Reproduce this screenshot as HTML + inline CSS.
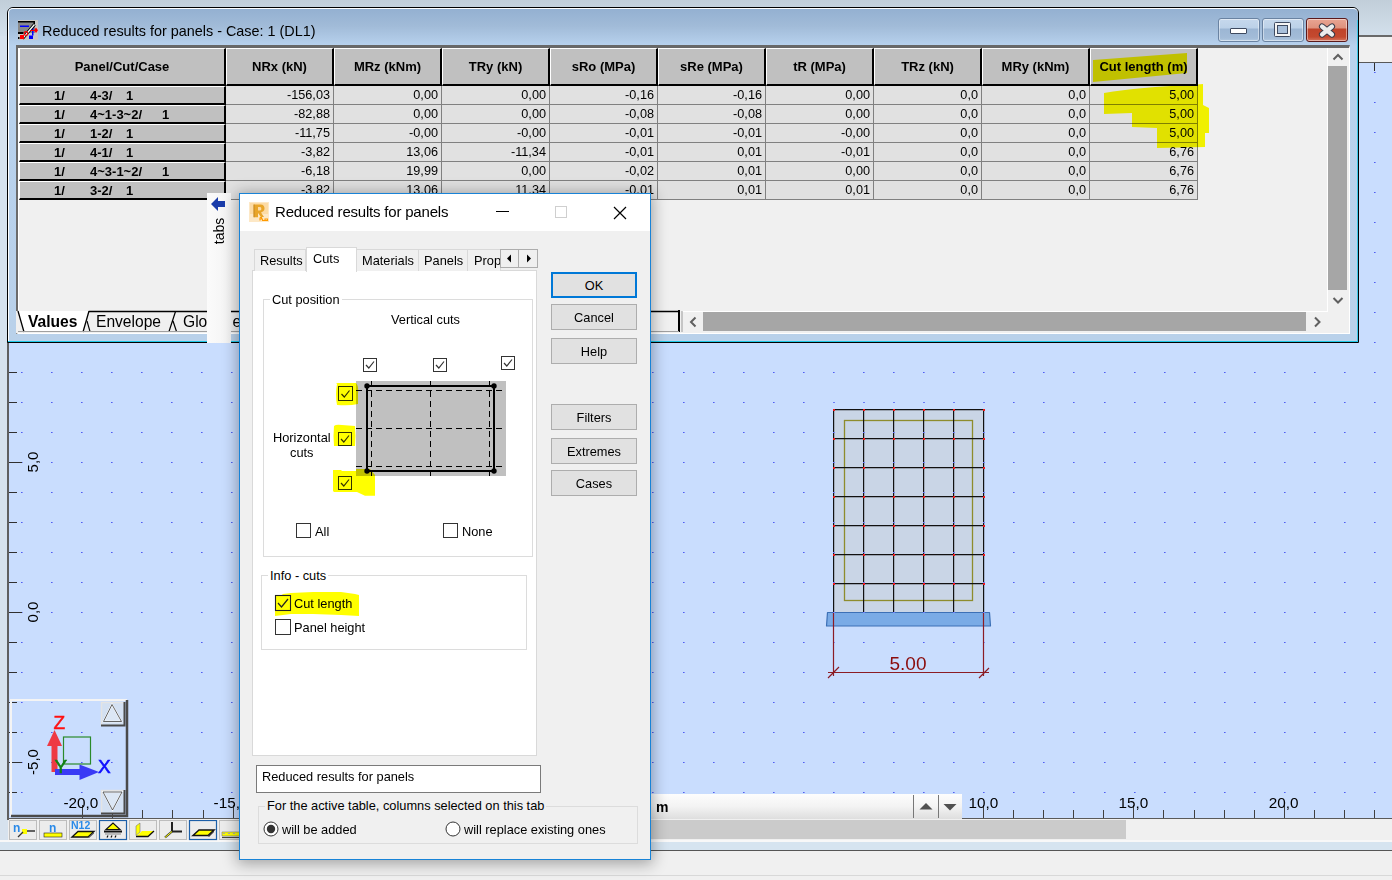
<!DOCTYPE html>
<html><head><meta charset="utf-8">
<style>
*{box-sizing:border-box;margin:0;padding:0}
html,body{width:1392px;height:880px;overflow:hidden;background:#f0f0f0;font-family:"Liberation Sans",sans-serif;position:relative}
.a{position:absolute}
#topbg{left:0;top:0;width:1392px;height:36px;background:linear-gradient(#c1ced9,#d3e0ec)}
#leftbg{left:0;top:36px;width:8px;height:815px;background:#d6e2ee}
#botbg{left:0;top:840px;width:1392px;height:11px;background:#d6e4f0;border-top:2px solid #f8f8f8;border-bottom:1px solid #555}
#tbband{left:1358px;top:35px;width:34px;height:28px;background:#f0f0f0;border-top:2px solid #6a6a6a;border-bottom:1px solid #585858}
#vp{left:7px;top:63px;width:1385px;height:757px;background:#c9ddfe;border-left:2px solid #5f5f5f}
#hscroll{left:9px;top:819px;width:1383px;height:21px;background:#f0f0f0}
#hthumb{left:640px;top:820px;width:486px;height:19px;background:#cbcbcb}
#status{left:0;top:851px;width:1392px;height:29px;background:#f0f0f0}
#status:after{content:"";position:absolute;left:0;top:24px;width:1392px;height:1px;background:#d8d8d8}
/* main window */
#win{left:7px;top:7px;width:1352px;height:336px;border:1px solid #000;border-radius:6px 6px 0 0;background:linear-gradient(#93b0d1 0px,#a1bbd8 18px,#b8d2ee 38px,#b9d1ea 100%)}
#win:before{content:"";position:absolute;left:0;top:0;right:0;bottom:0;border-top:1px solid #fff;border-left:1px solid #fff;border-radius:5px 5px 0 0}
#winbot{left:8px;top:341px;width:1350px;height:1px;background:#1ec8e8}
#winright{left:1357px;top:20px;width:1px;height:322px;background:#3cc8e8}
#title{left:42px;top:23px;font-size:14.4px;color:#000;white-space:nowrap}
#client{left:16px;top:45px;width:1334px;height:289px;background:#f0f0f0;border-top:3px solid #686868;border-left:2px solid #6b6b6b;border-bottom:1px solid #fff;border-right:1px solid #fff;box-shadow:inset 1px 0 0 #fff}
.wb{position:absolute;top:18px;width:42px;height:24px;border:1px solid #6a83a2;border-radius:3px;background:linear-gradient(#c6d8ec 0,#bcd1e8 9px,#9cb6d4 10px,#a3bcd8 19px,#b9cfe6 23px);box-shadow:inset 0 0 0 1px rgba(255,255,255,.45)}
#wclose{border-color:#5b1a1c;background:linear-gradient(#e9a593 0,#df917d 9px,#c0432a 10px,#c4492f 18px,#d9826c 23px)}
.hd{position:absolute;background:#c0c0c0;border-top:1px solid #fff;border-left:1px solid #fff;border-right:2px solid #000;border-bottom:2px solid #000;font-weight:bold;font-size:13px;text-align:center;white-space:nowrap;color:#000}
.rh{position:absolute;background:#c0c0c0;border-top:1px solid #fff;border-left:1px solid #fff;border-right:2px solid #000;border-bottom:2px solid #000;font-weight:bold;font-size:13px;white-space:pre;color:#000}
.dc{position:absolute;background:#e1e1e1;border-right:1px solid #808080;border-bottom:1px solid #808080;font-size:12.7px;text-align:right;padding-right:3px;white-space:nowrap;color:#000}
.sb{position:absolute;background:#a6a6a6}
/* dialog */
#dshadow{left:239px;top:193px;width:412px;height:667px;box-shadow:0 2px 14px 2px rgba(0,0,0,.32)}
#dlg{left:239px;top:193px;width:412px;height:667px;background:#f0f0f0;border:1px solid #1883d7}
#dlgtitle{left:240px;top:194px;width:410px;height:37px;background:#fff}
.t{position:absolute;font-size:12.8px;color:#000;white-space:nowrap;line-height:15px}
.btn{position:absolute;left:551px;width:86px;height:26px;background:#e1e1e1;border:1px solid #adadad;font-size:12.8px;text-align:center;line-height:25px;color:#000}
.cb{position:absolute;width:14px;height:14px;border:1px solid #333;background:#fff}
.cb svg{position:absolute;left:1px;top:1px}
.tab{position:absolute;top:249px;height:22px;background:#f0f0f0;border:1px solid #d9d9d9;border-bottom:none;font-size:12.8px;line-height:22px;padding-left:5px;color:#000;white-space:nowrap;overflow:hidden}
.grp{position:absolute;border:1px solid #dcdcdc}
.hl{position:absolute;background:#ffff00}
.mb{mix-blend-mode:multiply}
</style></head><body>
<div class="a" id="topbg"></div>
<div class="a" id="leftbg"></div>
<div class="a" id="tbband"></div>
<div class="a" id="vp"></div>
<div class="a" id="hscroll"></div>
<div class="a" id="hthumb"></div>
<div class="a" id="botbg"></div>
<div class="a" id="status"></div>
<svg class="a" style="left:0;top:0" width="1392" height="880" shape-rendering="crispEdges">
<path fill="#8390f6" d="M21 792h2v1h-2zM21 762h2v1h-2zM21 732h2v1h-2zM21 702h2v1h-2zM21 672h2v1h-2zM21 642h2v1h-2zM21 612h2v1h-2zM21 582h2v1h-2zM21 552h2v1h-2zM21 522h2v1h-2zM21 492h2v1h-2zM21 462h2v1h-2zM21 432h2v1h-2zM21 402h2v1h-2zM21 372h2v1h-2zM21 342h2v1h-2zM21 312h2v1h-2zM21 282h2v1h-2zM21 252h2v1h-2zM21 222h2v1h-2zM21 192h2v1h-2zM21 162h2v1h-2zM21 132h2v1h-2zM21 102h2v1h-2zM21 72h2v1h-2zM51 792h2v1h-2zM51 762h2v1h-2zM51 732h2v1h-2zM51 702h2v1h-2zM51 672h2v1h-2zM51 642h2v1h-2zM51 612h2v1h-2zM51 582h2v1h-2zM51 552h2v1h-2zM51 522h2v1h-2zM51 492h2v1h-2zM51 462h2v1h-2zM51 432h2v1h-2zM51 402h2v1h-2zM51 372h2v1h-2zM51 342h2v1h-2zM51 312h2v1h-2zM51 282h2v1h-2zM51 252h2v1h-2zM51 222h2v1h-2zM51 192h2v1h-2zM51 162h2v1h-2zM51 132h2v1h-2zM51 102h2v1h-2zM51 72h2v1h-2zM81 792h2v1h-2zM81 762h2v1h-2zM81 732h2v1h-2zM81 702h2v1h-2zM81 672h2v1h-2zM81 642h2v1h-2zM81 612h2v1h-2zM81 582h2v1h-2zM81 552h2v1h-2zM81 522h2v1h-2zM81 492h2v1h-2zM81 462h2v1h-2zM81 432h2v1h-2zM81 402h2v1h-2zM81 372h2v1h-2zM81 342h2v1h-2zM81 312h2v1h-2zM81 282h2v1h-2zM81 252h2v1h-2zM81 222h2v1h-2zM81 192h2v1h-2zM81 162h2v1h-2zM81 132h2v1h-2zM81 102h2v1h-2zM81 72h2v1h-2zM111 792h2v1h-2zM111 762h2v1h-2zM111 732h2v1h-2zM111 702h2v1h-2zM111 672h2v1h-2zM111 642h2v1h-2zM111 612h2v1h-2zM111 582h2v1h-2zM111 552h2v1h-2zM111 522h2v1h-2zM111 492h2v1h-2zM111 462h2v1h-2zM111 432h2v1h-2zM111 402h2v1h-2zM111 372h2v1h-2zM111 342h2v1h-2zM111 312h2v1h-2zM111 282h2v1h-2zM111 252h2v1h-2zM111 222h2v1h-2zM111 192h2v1h-2zM111 162h2v1h-2zM111 132h2v1h-2zM111 102h2v1h-2zM111 72h2v1h-2zM141 792h2v1h-2zM141 762h2v1h-2zM141 732h2v1h-2zM141 702h2v1h-2zM141 672h2v1h-2zM141 642h2v1h-2zM141 612h2v1h-2zM141 582h2v1h-2zM141 552h2v1h-2zM141 522h2v1h-2zM141 492h2v1h-2zM141 462h2v1h-2zM141 432h2v1h-2zM141 402h2v1h-2zM141 372h2v1h-2zM141 342h2v1h-2zM141 312h2v1h-2zM141 282h2v1h-2zM141 252h2v1h-2zM141 222h2v1h-2zM141 192h2v1h-2zM141 162h2v1h-2zM141 132h2v1h-2zM141 102h2v1h-2zM141 72h2v1h-2zM171 792h2v1h-2zM171 762h2v1h-2zM171 732h2v1h-2zM171 702h2v1h-2zM171 672h2v1h-2zM171 642h2v1h-2zM171 612h2v1h-2zM171 582h2v1h-2zM171 552h2v1h-2zM171 522h2v1h-2zM171 492h2v1h-2zM171 462h2v1h-2zM171 432h2v1h-2zM171 402h2v1h-2zM171 372h2v1h-2zM171 342h2v1h-2zM171 312h2v1h-2zM171 282h2v1h-2zM171 252h2v1h-2zM171 222h2v1h-2zM171 192h2v1h-2zM171 162h2v1h-2zM171 132h2v1h-2zM171 102h2v1h-2zM171 72h2v1h-2zM201 792h2v1h-2zM201 762h2v1h-2zM201 732h2v1h-2zM201 702h2v1h-2zM201 672h2v1h-2zM201 642h2v1h-2zM201 612h2v1h-2zM201 582h2v1h-2zM201 552h2v1h-2zM201 522h2v1h-2zM201 492h2v1h-2zM201 462h2v1h-2zM201 432h2v1h-2zM201 402h2v1h-2zM201 372h2v1h-2zM201 342h2v1h-2zM201 312h2v1h-2zM201 282h2v1h-2zM201 252h2v1h-2zM201 222h2v1h-2zM201 192h2v1h-2zM201 162h2v1h-2zM201 132h2v1h-2zM201 102h2v1h-2zM201 72h2v1h-2zM231 792h2v1h-2zM231 762h2v1h-2zM231 732h2v1h-2zM231 702h2v1h-2zM231 672h2v1h-2zM231 642h2v1h-2zM231 612h2v1h-2zM231 582h2v1h-2zM231 552h2v1h-2zM231 522h2v1h-2zM231 492h2v1h-2zM231 462h2v1h-2zM231 432h2v1h-2zM231 402h2v1h-2zM231 372h2v1h-2zM231 342h2v1h-2zM231 312h2v1h-2zM231 282h2v1h-2zM231 252h2v1h-2zM231 222h2v1h-2zM231 192h2v1h-2zM231 162h2v1h-2zM231 132h2v1h-2zM231 102h2v1h-2zM231 72h2v1h-2zM262 792h2v1h-2zM262 762h2v1h-2zM262 732h2v1h-2zM262 702h2v1h-2zM262 672h2v1h-2zM262 642h2v1h-2zM262 612h2v1h-2zM262 582h2v1h-2zM262 552h2v1h-2zM262 522h2v1h-2zM262 492h2v1h-2zM262 462h2v1h-2zM262 432h2v1h-2zM262 402h2v1h-2zM262 372h2v1h-2zM262 342h2v1h-2zM262 312h2v1h-2zM262 282h2v1h-2zM262 252h2v1h-2zM262 222h2v1h-2zM262 192h2v1h-2zM262 162h2v1h-2zM262 132h2v1h-2zM262 102h2v1h-2zM262 72h2v1h-2zM292 792h2v1h-2zM292 762h2v1h-2zM292 732h2v1h-2zM292 702h2v1h-2zM292 672h2v1h-2zM292 642h2v1h-2zM292 612h2v1h-2zM292 582h2v1h-2zM292 552h2v1h-2zM292 522h2v1h-2zM292 492h2v1h-2zM292 462h2v1h-2zM292 432h2v1h-2zM292 402h2v1h-2zM292 372h2v1h-2zM292 342h2v1h-2zM292 312h2v1h-2zM292 282h2v1h-2zM292 252h2v1h-2zM292 222h2v1h-2zM292 192h2v1h-2zM292 162h2v1h-2zM292 132h2v1h-2zM292 102h2v1h-2zM292 72h2v1h-2zM322 792h2v1h-2zM322 762h2v1h-2zM322 732h2v1h-2zM322 702h2v1h-2zM322 672h2v1h-2zM322 642h2v1h-2zM322 612h2v1h-2zM322 582h2v1h-2zM322 552h2v1h-2zM322 522h2v1h-2zM322 492h2v1h-2zM322 462h2v1h-2zM322 432h2v1h-2zM322 402h2v1h-2zM322 372h2v1h-2zM322 342h2v1h-2zM322 312h2v1h-2zM322 282h2v1h-2zM322 252h2v1h-2zM322 222h2v1h-2zM322 192h2v1h-2zM322 162h2v1h-2zM322 132h2v1h-2zM322 102h2v1h-2zM322 72h2v1h-2zM352 792h2v1h-2zM352 762h2v1h-2zM352 732h2v1h-2zM352 702h2v1h-2zM352 672h2v1h-2zM352 642h2v1h-2zM352 612h2v1h-2zM352 582h2v1h-2zM352 552h2v1h-2zM352 522h2v1h-2zM352 492h2v1h-2zM352 462h2v1h-2zM352 432h2v1h-2zM352 402h2v1h-2zM352 372h2v1h-2zM352 342h2v1h-2zM352 312h2v1h-2zM352 282h2v1h-2zM352 252h2v1h-2zM352 222h2v1h-2zM352 192h2v1h-2zM352 162h2v1h-2zM352 132h2v1h-2zM352 102h2v1h-2zM352 72h2v1h-2zM382 792h2v1h-2zM382 762h2v1h-2zM382 732h2v1h-2zM382 702h2v1h-2zM382 672h2v1h-2zM382 642h2v1h-2zM382 612h2v1h-2zM382 582h2v1h-2zM382 552h2v1h-2zM382 522h2v1h-2zM382 492h2v1h-2zM382 462h2v1h-2zM382 432h2v1h-2zM382 402h2v1h-2zM382 372h2v1h-2zM382 342h2v1h-2zM382 312h2v1h-2zM382 282h2v1h-2zM382 252h2v1h-2zM382 222h2v1h-2zM382 192h2v1h-2zM382 162h2v1h-2zM382 132h2v1h-2zM382 102h2v1h-2zM382 72h2v1h-2zM412 792h2v1h-2zM412 762h2v1h-2zM412 732h2v1h-2zM412 702h2v1h-2zM412 672h2v1h-2zM412 642h2v1h-2zM412 612h2v1h-2zM412 582h2v1h-2zM412 552h2v1h-2zM412 522h2v1h-2zM412 492h2v1h-2zM412 462h2v1h-2zM412 432h2v1h-2zM412 402h2v1h-2zM412 372h2v1h-2zM412 342h2v1h-2zM412 312h2v1h-2zM412 282h2v1h-2zM412 252h2v1h-2zM412 222h2v1h-2zM412 192h2v1h-2zM412 162h2v1h-2zM412 132h2v1h-2zM412 102h2v1h-2zM412 72h2v1h-2zM442 792h2v1h-2zM442 762h2v1h-2zM442 732h2v1h-2zM442 702h2v1h-2zM442 672h2v1h-2zM442 642h2v1h-2zM442 612h2v1h-2zM442 582h2v1h-2zM442 552h2v1h-2zM442 522h2v1h-2zM442 492h2v1h-2zM442 462h2v1h-2zM442 432h2v1h-2zM442 402h2v1h-2zM442 372h2v1h-2zM442 342h2v1h-2zM442 312h2v1h-2zM442 282h2v1h-2zM442 252h2v1h-2zM442 222h2v1h-2zM442 192h2v1h-2zM442 162h2v1h-2zM442 132h2v1h-2zM442 102h2v1h-2zM442 72h2v1h-2zM472 792h2v1h-2zM472 762h2v1h-2zM472 732h2v1h-2zM472 702h2v1h-2zM472 672h2v1h-2zM472 642h2v1h-2zM472 612h2v1h-2zM472 582h2v1h-2zM472 552h2v1h-2zM472 522h2v1h-2zM472 492h2v1h-2zM472 462h2v1h-2zM472 432h2v1h-2zM472 402h2v1h-2zM472 372h2v1h-2zM472 342h2v1h-2zM472 312h2v1h-2zM472 282h2v1h-2zM472 252h2v1h-2zM472 222h2v1h-2zM472 192h2v1h-2zM472 162h2v1h-2zM472 132h2v1h-2zM472 102h2v1h-2zM472 72h2v1h-2zM502 792h2v1h-2zM502 762h2v1h-2zM502 732h2v1h-2zM502 702h2v1h-2zM502 672h2v1h-2zM502 642h2v1h-2zM502 612h2v1h-2zM502 582h2v1h-2zM502 552h2v1h-2zM502 522h2v1h-2zM502 492h2v1h-2zM502 462h2v1h-2zM502 432h2v1h-2zM502 402h2v1h-2zM502 372h2v1h-2zM502 342h2v1h-2zM502 312h2v1h-2zM502 282h2v1h-2zM502 252h2v1h-2zM502 222h2v1h-2zM502 192h2v1h-2zM502 162h2v1h-2zM502 132h2v1h-2zM502 102h2v1h-2zM502 72h2v1h-2zM532 792h2v1h-2zM532 762h2v1h-2zM532 732h2v1h-2zM532 702h2v1h-2zM532 672h2v1h-2zM532 642h2v1h-2zM532 612h2v1h-2zM532 582h2v1h-2zM532 552h2v1h-2zM532 522h2v1h-2zM532 492h2v1h-2zM532 462h2v1h-2zM532 432h2v1h-2zM532 402h2v1h-2zM532 372h2v1h-2zM532 342h2v1h-2zM532 312h2v1h-2zM532 282h2v1h-2zM532 252h2v1h-2zM532 222h2v1h-2zM532 192h2v1h-2zM532 162h2v1h-2zM532 132h2v1h-2zM532 102h2v1h-2zM532 72h2v1h-2zM562 792h2v1h-2zM562 762h2v1h-2zM562 732h2v1h-2zM562 702h2v1h-2zM562 672h2v1h-2zM562 642h2v1h-2zM562 612h2v1h-2zM562 582h2v1h-2zM562 552h2v1h-2zM562 522h2v1h-2zM562 492h2v1h-2zM562 462h2v1h-2zM562 432h2v1h-2zM562 402h2v1h-2zM562 372h2v1h-2zM562 342h2v1h-2zM562 312h2v1h-2zM562 282h2v1h-2zM562 252h2v1h-2zM562 222h2v1h-2zM562 192h2v1h-2zM562 162h2v1h-2zM562 132h2v1h-2zM562 102h2v1h-2zM562 72h2v1h-2zM592 792h2v1h-2zM592 762h2v1h-2zM592 732h2v1h-2zM592 702h2v1h-2zM592 672h2v1h-2zM592 642h2v1h-2zM592 612h2v1h-2zM592 582h2v1h-2zM592 552h2v1h-2zM592 522h2v1h-2zM592 492h2v1h-2zM592 462h2v1h-2zM592 432h2v1h-2zM592 402h2v1h-2zM592 372h2v1h-2zM592 342h2v1h-2zM592 312h2v1h-2zM592 282h2v1h-2zM592 252h2v1h-2zM592 222h2v1h-2zM592 192h2v1h-2zM592 162h2v1h-2zM592 132h2v1h-2zM592 102h2v1h-2zM592 72h2v1h-2zM622 792h2v1h-2zM622 762h2v1h-2zM622 732h2v1h-2zM622 702h2v1h-2zM622 672h2v1h-2zM622 642h2v1h-2zM622 612h2v1h-2zM622 582h2v1h-2zM622 552h2v1h-2zM622 522h2v1h-2zM622 492h2v1h-2zM622 462h2v1h-2zM622 432h2v1h-2zM622 402h2v1h-2zM622 372h2v1h-2zM622 342h2v1h-2zM622 312h2v1h-2zM622 282h2v1h-2zM622 252h2v1h-2zM622 222h2v1h-2zM622 192h2v1h-2zM622 162h2v1h-2zM622 132h2v1h-2zM622 102h2v1h-2zM622 72h2v1h-2zM652 792h2v1h-2zM652 762h2v1h-2zM652 732h2v1h-2zM652 702h2v1h-2zM652 672h2v1h-2zM652 642h2v1h-2zM652 612h2v1h-2zM652 582h2v1h-2zM652 552h2v1h-2zM652 522h2v1h-2zM652 492h2v1h-2zM652 462h2v1h-2zM652 432h2v1h-2zM652 402h2v1h-2zM652 372h2v1h-2zM652 342h2v1h-2zM652 312h2v1h-2zM652 282h2v1h-2zM652 252h2v1h-2zM652 222h2v1h-2zM652 192h2v1h-2zM652 162h2v1h-2zM652 132h2v1h-2zM652 102h2v1h-2zM652 72h2v1h-2zM683 792h2v1h-2zM683 762h2v1h-2zM683 732h2v1h-2zM683 702h2v1h-2zM683 672h2v1h-2zM683 642h2v1h-2zM683 612h2v1h-2zM683 582h2v1h-2zM683 552h2v1h-2zM683 522h2v1h-2zM683 492h2v1h-2zM683 462h2v1h-2zM683 432h2v1h-2zM683 402h2v1h-2zM683 372h2v1h-2zM683 342h2v1h-2zM683 312h2v1h-2zM683 282h2v1h-2zM683 252h2v1h-2zM683 222h2v1h-2zM683 192h2v1h-2zM683 162h2v1h-2zM683 132h2v1h-2zM683 102h2v1h-2zM683 72h2v1h-2zM713 792h2v1h-2zM713 762h2v1h-2zM713 732h2v1h-2zM713 702h2v1h-2zM713 672h2v1h-2zM713 642h2v1h-2zM713 612h2v1h-2zM713 582h2v1h-2zM713 552h2v1h-2zM713 522h2v1h-2zM713 492h2v1h-2zM713 462h2v1h-2zM713 432h2v1h-2zM713 402h2v1h-2zM713 372h2v1h-2zM713 342h2v1h-2zM713 312h2v1h-2zM713 282h2v1h-2zM713 252h2v1h-2zM713 222h2v1h-2zM713 192h2v1h-2zM713 162h2v1h-2zM713 132h2v1h-2zM713 102h2v1h-2zM713 72h2v1h-2zM743 792h2v1h-2zM743 762h2v1h-2zM743 732h2v1h-2zM743 702h2v1h-2zM743 672h2v1h-2zM743 642h2v1h-2zM743 612h2v1h-2zM743 582h2v1h-2zM743 552h2v1h-2zM743 522h2v1h-2zM743 492h2v1h-2zM743 462h2v1h-2zM743 432h2v1h-2zM743 402h2v1h-2zM743 372h2v1h-2zM743 342h2v1h-2zM743 312h2v1h-2zM743 282h2v1h-2zM743 252h2v1h-2zM743 222h2v1h-2zM743 192h2v1h-2zM743 162h2v1h-2zM743 132h2v1h-2zM743 102h2v1h-2zM743 72h2v1h-2zM773 792h2v1h-2zM773 762h2v1h-2zM773 732h2v1h-2zM773 702h2v1h-2zM773 672h2v1h-2zM773 642h2v1h-2zM773 612h2v1h-2zM773 582h2v1h-2zM773 552h2v1h-2zM773 522h2v1h-2zM773 492h2v1h-2zM773 462h2v1h-2zM773 432h2v1h-2zM773 402h2v1h-2zM773 372h2v1h-2zM773 342h2v1h-2zM773 312h2v1h-2zM773 282h2v1h-2zM773 252h2v1h-2zM773 222h2v1h-2zM773 192h2v1h-2zM773 162h2v1h-2zM773 132h2v1h-2zM773 102h2v1h-2zM773 72h2v1h-2zM803 792h2v1h-2zM803 762h2v1h-2zM803 732h2v1h-2zM803 702h2v1h-2zM803 672h2v1h-2zM803 642h2v1h-2zM803 612h2v1h-2zM803 582h2v1h-2zM803 552h2v1h-2zM803 522h2v1h-2zM803 492h2v1h-2zM803 462h2v1h-2zM803 432h2v1h-2zM803 402h2v1h-2zM803 372h2v1h-2zM803 342h2v1h-2zM803 312h2v1h-2zM803 282h2v1h-2zM803 252h2v1h-2zM803 222h2v1h-2zM803 192h2v1h-2zM803 162h2v1h-2zM803 132h2v1h-2zM803 102h2v1h-2zM803 72h2v1h-2zM833 792h2v1h-2zM833 762h2v1h-2zM833 732h2v1h-2zM833 702h2v1h-2zM833 672h2v1h-2zM833 642h2v1h-2zM833 612h2v1h-2zM833 582h2v1h-2zM833 552h2v1h-2zM833 522h2v1h-2zM833 492h2v1h-2zM833 462h2v1h-2zM833 432h2v1h-2zM833 402h2v1h-2zM833 372h2v1h-2zM833 342h2v1h-2zM833 312h2v1h-2zM833 282h2v1h-2zM833 252h2v1h-2zM833 222h2v1h-2zM833 192h2v1h-2zM833 162h2v1h-2zM833 132h2v1h-2zM833 102h2v1h-2zM833 72h2v1h-2zM863 792h2v1h-2zM863 762h2v1h-2zM863 732h2v1h-2zM863 702h2v1h-2zM863 672h2v1h-2zM863 642h2v1h-2zM863 612h2v1h-2zM863 582h2v1h-2zM863 552h2v1h-2zM863 522h2v1h-2zM863 492h2v1h-2zM863 462h2v1h-2zM863 432h2v1h-2zM863 402h2v1h-2zM863 372h2v1h-2zM863 342h2v1h-2zM863 312h2v1h-2zM863 282h2v1h-2zM863 252h2v1h-2zM863 222h2v1h-2zM863 192h2v1h-2zM863 162h2v1h-2zM863 132h2v1h-2zM863 102h2v1h-2zM863 72h2v1h-2zM893 792h2v1h-2zM893 762h2v1h-2zM893 732h2v1h-2zM893 702h2v1h-2zM893 672h2v1h-2zM893 642h2v1h-2zM893 612h2v1h-2zM893 582h2v1h-2zM893 552h2v1h-2zM893 522h2v1h-2zM893 492h2v1h-2zM893 462h2v1h-2zM893 432h2v1h-2zM893 402h2v1h-2zM893 372h2v1h-2zM893 342h2v1h-2zM893 312h2v1h-2zM893 282h2v1h-2zM893 252h2v1h-2zM893 222h2v1h-2zM893 192h2v1h-2zM893 162h2v1h-2zM893 132h2v1h-2zM893 102h2v1h-2zM893 72h2v1h-2zM923 792h2v1h-2zM923 762h2v1h-2zM923 732h2v1h-2zM923 702h2v1h-2zM923 672h2v1h-2zM923 642h2v1h-2zM923 612h2v1h-2zM923 582h2v1h-2zM923 552h2v1h-2zM923 522h2v1h-2zM923 492h2v1h-2zM923 462h2v1h-2zM923 432h2v1h-2zM923 402h2v1h-2zM923 372h2v1h-2zM923 342h2v1h-2zM923 312h2v1h-2zM923 282h2v1h-2zM923 252h2v1h-2zM923 222h2v1h-2zM923 192h2v1h-2zM923 162h2v1h-2zM923 132h2v1h-2zM923 102h2v1h-2zM923 72h2v1h-2zM953 792h2v1h-2zM953 762h2v1h-2zM953 732h2v1h-2zM953 702h2v1h-2zM953 672h2v1h-2zM953 642h2v1h-2zM953 612h2v1h-2zM953 582h2v1h-2zM953 552h2v1h-2zM953 522h2v1h-2zM953 492h2v1h-2zM953 462h2v1h-2zM953 432h2v1h-2zM953 402h2v1h-2zM953 372h2v1h-2zM953 342h2v1h-2zM953 312h2v1h-2zM953 282h2v1h-2zM953 252h2v1h-2zM953 222h2v1h-2zM953 192h2v1h-2zM953 162h2v1h-2zM953 132h2v1h-2zM953 102h2v1h-2zM953 72h2v1h-2zM983 792h2v1h-2zM983 762h2v1h-2zM983 732h2v1h-2zM983 702h2v1h-2zM983 672h2v1h-2zM983 642h2v1h-2zM983 612h2v1h-2zM983 582h2v1h-2zM983 552h2v1h-2zM983 522h2v1h-2zM983 492h2v1h-2zM983 462h2v1h-2zM983 432h2v1h-2zM983 402h2v1h-2zM983 372h2v1h-2zM983 342h2v1h-2zM983 312h2v1h-2zM983 282h2v1h-2zM983 252h2v1h-2zM983 222h2v1h-2zM983 192h2v1h-2zM983 162h2v1h-2zM983 132h2v1h-2zM983 102h2v1h-2zM983 72h2v1h-2zM1013 792h2v1h-2zM1013 762h2v1h-2zM1013 732h2v1h-2zM1013 702h2v1h-2zM1013 672h2v1h-2zM1013 642h2v1h-2zM1013 612h2v1h-2zM1013 582h2v1h-2zM1013 552h2v1h-2zM1013 522h2v1h-2zM1013 492h2v1h-2zM1013 462h2v1h-2zM1013 432h2v1h-2zM1013 402h2v1h-2zM1013 372h2v1h-2zM1013 342h2v1h-2zM1013 312h2v1h-2zM1013 282h2v1h-2zM1013 252h2v1h-2zM1013 222h2v1h-2zM1013 192h2v1h-2zM1013 162h2v1h-2zM1013 132h2v1h-2zM1013 102h2v1h-2zM1013 72h2v1h-2zM1043 792h2v1h-2zM1043 762h2v1h-2zM1043 732h2v1h-2zM1043 702h2v1h-2zM1043 672h2v1h-2zM1043 642h2v1h-2zM1043 612h2v1h-2zM1043 582h2v1h-2zM1043 552h2v1h-2zM1043 522h2v1h-2zM1043 492h2v1h-2zM1043 462h2v1h-2zM1043 432h2v1h-2zM1043 402h2v1h-2zM1043 372h2v1h-2zM1043 342h2v1h-2zM1043 312h2v1h-2zM1043 282h2v1h-2zM1043 252h2v1h-2zM1043 222h2v1h-2zM1043 192h2v1h-2zM1043 162h2v1h-2zM1043 132h2v1h-2zM1043 102h2v1h-2zM1043 72h2v1h-2zM1073 792h2v1h-2zM1073 762h2v1h-2zM1073 732h2v1h-2zM1073 702h2v1h-2zM1073 672h2v1h-2zM1073 642h2v1h-2zM1073 612h2v1h-2zM1073 582h2v1h-2zM1073 552h2v1h-2zM1073 522h2v1h-2zM1073 492h2v1h-2zM1073 462h2v1h-2zM1073 432h2v1h-2zM1073 402h2v1h-2zM1073 372h2v1h-2zM1073 342h2v1h-2zM1073 312h2v1h-2zM1073 282h2v1h-2zM1073 252h2v1h-2zM1073 222h2v1h-2zM1073 192h2v1h-2zM1073 162h2v1h-2zM1073 132h2v1h-2zM1073 102h2v1h-2zM1073 72h2v1h-2zM1104 792h2v1h-2zM1104 762h2v1h-2zM1104 732h2v1h-2zM1104 702h2v1h-2zM1104 672h2v1h-2zM1104 642h2v1h-2zM1104 612h2v1h-2zM1104 582h2v1h-2zM1104 552h2v1h-2zM1104 522h2v1h-2zM1104 492h2v1h-2zM1104 462h2v1h-2zM1104 432h2v1h-2zM1104 402h2v1h-2zM1104 372h2v1h-2zM1104 342h2v1h-2zM1104 312h2v1h-2zM1104 282h2v1h-2zM1104 252h2v1h-2zM1104 222h2v1h-2zM1104 192h2v1h-2zM1104 162h2v1h-2zM1104 132h2v1h-2zM1104 102h2v1h-2zM1104 72h2v1h-2zM1134 792h2v1h-2zM1134 762h2v1h-2zM1134 732h2v1h-2zM1134 702h2v1h-2zM1134 672h2v1h-2zM1134 642h2v1h-2zM1134 612h2v1h-2zM1134 582h2v1h-2zM1134 552h2v1h-2zM1134 522h2v1h-2zM1134 492h2v1h-2zM1134 462h2v1h-2zM1134 432h2v1h-2zM1134 402h2v1h-2zM1134 372h2v1h-2zM1134 342h2v1h-2zM1134 312h2v1h-2zM1134 282h2v1h-2zM1134 252h2v1h-2zM1134 222h2v1h-2zM1134 192h2v1h-2zM1134 162h2v1h-2zM1134 132h2v1h-2zM1134 102h2v1h-2zM1134 72h2v1h-2zM1164 792h2v1h-2zM1164 762h2v1h-2zM1164 732h2v1h-2zM1164 702h2v1h-2zM1164 672h2v1h-2zM1164 642h2v1h-2zM1164 612h2v1h-2zM1164 582h2v1h-2zM1164 552h2v1h-2zM1164 522h2v1h-2zM1164 492h2v1h-2zM1164 462h2v1h-2zM1164 432h2v1h-2zM1164 402h2v1h-2zM1164 372h2v1h-2zM1164 342h2v1h-2zM1164 312h2v1h-2zM1164 282h2v1h-2zM1164 252h2v1h-2zM1164 222h2v1h-2zM1164 192h2v1h-2zM1164 162h2v1h-2zM1164 132h2v1h-2zM1164 102h2v1h-2zM1164 72h2v1h-2zM1194 792h2v1h-2zM1194 762h2v1h-2zM1194 732h2v1h-2zM1194 702h2v1h-2zM1194 672h2v1h-2zM1194 642h2v1h-2zM1194 612h2v1h-2zM1194 582h2v1h-2zM1194 552h2v1h-2zM1194 522h2v1h-2zM1194 492h2v1h-2zM1194 462h2v1h-2zM1194 432h2v1h-2zM1194 402h2v1h-2zM1194 372h2v1h-2zM1194 342h2v1h-2zM1194 312h2v1h-2zM1194 282h2v1h-2zM1194 252h2v1h-2zM1194 222h2v1h-2zM1194 192h2v1h-2zM1194 162h2v1h-2zM1194 132h2v1h-2zM1194 102h2v1h-2zM1194 72h2v1h-2zM1224 792h2v1h-2zM1224 762h2v1h-2zM1224 732h2v1h-2zM1224 702h2v1h-2zM1224 672h2v1h-2zM1224 642h2v1h-2zM1224 612h2v1h-2zM1224 582h2v1h-2zM1224 552h2v1h-2zM1224 522h2v1h-2zM1224 492h2v1h-2zM1224 462h2v1h-2zM1224 432h2v1h-2zM1224 402h2v1h-2zM1224 372h2v1h-2zM1224 342h2v1h-2zM1224 312h2v1h-2zM1224 282h2v1h-2zM1224 252h2v1h-2zM1224 222h2v1h-2zM1224 192h2v1h-2zM1224 162h2v1h-2zM1224 132h2v1h-2zM1224 102h2v1h-2zM1224 72h2v1h-2zM1254 792h2v1h-2zM1254 762h2v1h-2zM1254 732h2v1h-2zM1254 702h2v1h-2zM1254 672h2v1h-2zM1254 642h2v1h-2zM1254 612h2v1h-2zM1254 582h2v1h-2zM1254 552h2v1h-2zM1254 522h2v1h-2zM1254 492h2v1h-2zM1254 462h2v1h-2zM1254 432h2v1h-2zM1254 402h2v1h-2zM1254 372h2v1h-2zM1254 342h2v1h-2zM1254 312h2v1h-2zM1254 282h2v1h-2zM1254 252h2v1h-2zM1254 222h2v1h-2zM1254 192h2v1h-2zM1254 162h2v1h-2zM1254 132h2v1h-2zM1254 102h2v1h-2zM1254 72h2v1h-2zM1284 792h2v1h-2zM1284 762h2v1h-2zM1284 732h2v1h-2zM1284 702h2v1h-2zM1284 672h2v1h-2zM1284 642h2v1h-2zM1284 612h2v1h-2zM1284 582h2v1h-2zM1284 552h2v1h-2zM1284 522h2v1h-2zM1284 492h2v1h-2zM1284 462h2v1h-2zM1284 432h2v1h-2zM1284 402h2v1h-2zM1284 372h2v1h-2zM1284 342h2v1h-2zM1284 312h2v1h-2zM1284 282h2v1h-2zM1284 252h2v1h-2zM1284 222h2v1h-2zM1284 192h2v1h-2zM1284 162h2v1h-2zM1284 132h2v1h-2zM1284 102h2v1h-2zM1284 72h2v1h-2zM1314 792h2v1h-2zM1314 762h2v1h-2zM1314 732h2v1h-2zM1314 702h2v1h-2zM1314 672h2v1h-2zM1314 642h2v1h-2zM1314 612h2v1h-2zM1314 582h2v1h-2zM1314 552h2v1h-2zM1314 522h2v1h-2zM1314 492h2v1h-2zM1314 462h2v1h-2zM1314 432h2v1h-2zM1314 402h2v1h-2zM1314 372h2v1h-2zM1314 342h2v1h-2zM1314 312h2v1h-2zM1314 282h2v1h-2zM1314 252h2v1h-2zM1314 222h2v1h-2zM1314 192h2v1h-2zM1314 162h2v1h-2zM1314 132h2v1h-2zM1314 102h2v1h-2zM1314 72h2v1h-2zM1344 792h2v1h-2zM1344 762h2v1h-2zM1344 732h2v1h-2zM1344 702h2v1h-2zM1344 672h2v1h-2zM1344 642h2v1h-2zM1344 612h2v1h-2zM1344 582h2v1h-2zM1344 552h2v1h-2zM1344 522h2v1h-2zM1344 492h2v1h-2zM1344 462h2v1h-2zM1344 432h2v1h-2zM1344 402h2v1h-2zM1344 372h2v1h-2zM1344 342h2v1h-2zM1344 312h2v1h-2zM1344 282h2v1h-2zM1344 252h2v1h-2zM1344 222h2v1h-2zM1344 192h2v1h-2zM1344 162h2v1h-2zM1344 132h2v1h-2zM1344 102h2v1h-2zM1344 72h2v1h-2zM1374 792h2v1h-2zM1374 762h2v1h-2zM1374 732h2v1h-2zM1374 702h2v1h-2zM1374 672h2v1h-2zM1374 642h2v1h-2zM1374 612h2v1h-2zM1374 582h2v1h-2zM1374 552h2v1h-2zM1374 522h2v1h-2zM1374 492h2v1h-2zM1374 462h2v1h-2zM1374 432h2v1h-2zM1374 402h2v1h-2zM1374 372h2v1h-2zM1374 342h2v1h-2zM1374 312h2v1h-2zM1374 282h2v1h-2zM1374 252h2v1h-2zM1374 222h2v1h-2zM1374 192h2v1h-2zM1374 162h2v1h-2zM1374 132h2v1h-2zM1374 102h2v1h-2zM1374 72h2v1h-2z"/>
<path fill="#4f5ff2" d="M21 792h1v1h-1zM21 762h1v1h-1zM21 732h1v1h-1zM21 702h1v1h-1zM21 672h1v1h-1zM21 642h1v1h-1zM21 612h1v1h-1zM21 582h1v1h-1zM21 552h1v1h-1zM21 522h1v1h-1zM21 492h1v1h-1zM21 462h1v1h-1zM21 432h1v1h-1zM21 402h1v1h-1zM21 372h1v1h-1zM21 342h1v1h-1zM21 312h1v1h-1zM21 282h1v1h-1zM21 252h1v1h-1zM21 222h1v1h-1zM21 192h1v1h-1zM21 162h1v1h-1zM21 132h1v1h-1zM21 102h1v1h-1zM21 72h1v1h-1zM51 792h1v1h-1zM51 762h1v1h-1zM51 732h1v1h-1zM51 702h1v1h-1zM51 672h1v1h-1zM51 642h1v1h-1zM51 612h1v1h-1zM51 582h1v1h-1zM51 552h1v1h-1zM51 522h1v1h-1zM51 492h1v1h-1zM51 462h1v1h-1zM51 432h1v1h-1zM51 402h1v1h-1zM51 372h1v1h-1zM51 342h1v1h-1zM51 312h1v1h-1zM51 282h1v1h-1zM51 252h1v1h-1zM51 222h1v1h-1zM51 192h1v1h-1zM51 162h1v1h-1zM51 132h1v1h-1zM51 102h1v1h-1zM51 72h1v1h-1zM81 792h1v1h-1zM81 762h1v1h-1zM81 732h1v1h-1zM81 702h1v1h-1zM81 672h1v1h-1zM81 642h1v1h-1zM81 612h1v1h-1zM81 582h1v1h-1zM81 552h1v1h-1zM81 522h1v1h-1zM81 492h1v1h-1zM81 462h1v1h-1zM81 432h1v1h-1zM81 402h1v1h-1zM81 372h1v1h-1zM81 342h1v1h-1zM81 312h1v1h-1zM81 282h1v1h-1zM81 252h1v1h-1zM81 222h1v1h-1zM81 192h1v1h-1zM81 162h1v1h-1zM81 132h1v1h-1zM81 102h1v1h-1zM81 72h1v1h-1zM111 792h1v1h-1zM111 762h1v1h-1zM111 732h1v1h-1zM111 702h1v1h-1zM111 672h1v1h-1zM111 642h1v1h-1zM111 612h1v1h-1zM111 582h1v1h-1zM111 552h1v1h-1zM111 522h1v1h-1zM111 492h1v1h-1zM111 462h1v1h-1zM111 432h1v1h-1zM111 402h1v1h-1zM111 372h1v1h-1zM111 342h1v1h-1zM111 312h1v1h-1zM111 282h1v1h-1zM111 252h1v1h-1zM111 222h1v1h-1zM111 192h1v1h-1zM111 162h1v1h-1zM111 132h1v1h-1zM111 102h1v1h-1zM111 72h1v1h-1zM141 792h1v1h-1zM141 762h1v1h-1zM141 732h1v1h-1zM141 702h1v1h-1zM141 672h1v1h-1zM141 642h1v1h-1zM141 612h1v1h-1zM141 582h1v1h-1zM141 552h1v1h-1zM141 522h1v1h-1zM141 492h1v1h-1zM141 462h1v1h-1zM141 432h1v1h-1zM141 402h1v1h-1zM141 372h1v1h-1zM141 342h1v1h-1zM141 312h1v1h-1zM141 282h1v1h-1zM141 252h1v1h-1zM141 222h1v1h-1zM141 192h1v1h-1zM141 162h1v1h-1zM141 132h1v1h-1zM141 102h1v1h-1zM141 72h1v1h-1zM171 792h1v1h-1zM171 762h1v1h-1zM171 732h1v1h-1zM171 702h1v1h-1zM171 672h1v1h-1zM171 642h1v1h-1zM171 612h1v1h-1zM171 582h1v1h-1zM171 552h1v1h-1zM171 522h1v1h-1zM171 492h1v1h-1zM171 462h1v1h-1zM171 432h1v1h-1zM171 402h1v1h-1zM171 372h1v1h-1zM171 342h1v1h-1zM171 312h1v1h-1zM171 282h1v1h-1zM171 252h1v1h-1zM171 222h1v1h-1zM171 192h1v1h-1zM171 162h1v1h-1zM171 132h1v1h-1zM171 102h1v1h-1zM171 72h1v1h-1zM201 792h1v1h-1zM201 762h1v1h-1zM201 732h1v1h-1zM201 702h1v1h-1zM201 672h1v1h-1zM201 642h1v1h-1zM201 612h1v1h-1zM201 582h1v1h-1zM201 552h1v1h-1zM201 522h1v1h-1zM201 492h1v1h-1zM201 462h1v1h-1zM201 432h1v1h-1zM201 402h1v1h-1zM201 372h1v1h-1zM201 342h1v1h-1zM201 312h1v1h-1zM201 282h1v1h-1zM201 252h1v1h-1zM201 222h1v1h-1zM201 192h1v1h-1zM201 162h1v1h-1zM201 132h1v1h-1zM201 102h1v1h-1zM201 72h1v1h-1zM231 792h1v1h-1zM231 762h1v1h-1zM231 732h1v1h-1zM231 702h1v1h-1zM231 672h1v1h-1zM231 642h1v1h-1zM231 612h1v1h-1zM231 582h1v1h-1zM231 552h1v1h-1zM231 522h1v1h-1zM231 492h1v1h-1zM231 462h1v1h-1zM231 432h1v1h-1zM231 402h1v1h-1zM231 372h1v1h-1zM231 342h1v1h-1zM231 312h1v1h-1zM231 282h1v1h-1zM231 252h1v1h-1zM231 222h1v1h-1zM231 192h1v1h-1zM231 162h1v1h-1zM231 132h1v1h-1zM231 102h1v1h-1zM231 72h1v1h-1zM262 792h1v1h-1zM262 762h1v1h-1zM262 732h1v1h-1zM262 702h1v1h-1zM262 672h1v1h-1zM262 642h1v1h-1zM262 612h1v1h-1zM262 582h1v1h-1zM262 552h1v1h-1zM262 522h1v1h-1zM262 492h1v1h-1zM262 462h1v1h-1zM262 432h1v1h-1zM262 402h1v1h-1zM262 372h1v1h-1zM262 342h1v1h-1zM262 312h1v1h-1zM262 282h1v1h-1zM262 252h1v1h-1zM262 222h1v1h-1zM262 192h1v1h-1zM262 162h1v1h-1zM262 132h1v1h-1zM262 102h1v1h-1zM262 72h1v1h-1zM292 792h1v1h-1zM292 762h1v1h-1zM292 732h1v1h-1zM292 702h1v1h-1zM292 672h1v1h-1zM292 642h1v1h-1zM292 612h1v1h-1zM292 582h1v1h-1zM292 552h1v1h-1zM292 522h1v1h-1zM292 492h1v1h-1zM292 462h1v1h-1zM292 432h1v1h-1zM292 402h1v1h-1zM292 372h1v1h-1zM292 342h1v1h-1zM292 312h1v1h-1zM292 282h1v1h-1zM292 252h1v1h-1zM292 222h1v1h-1zM292 192h1v1h-1zM292 162h1v1h-1zM292 132h1v1h-1zM292 102h1v1h-1zM292 72h1v1h-1zM322 792h1v1h-1zM322 762h1v1h-1zM322 732h1v1h-1zM322 702h1v1h-1zM322 672h1v1h-1zM322 642h1v1h-1zM322 612h1v1h-1zM322 582h1v1h-1zM322 552h1v1h-1zM322 522h1v1h-1zM322 492h1v1h-1zM322 462h1v1h-1zM322 432h1v1h-1zM322 402h1v1h-1zM322 372h1v1h-1zM322 342h1v1h-1zM322 312h1v1h-1zM322 282h1v1h-1zM322 252h1v1h-1zM322 222h1v1h-1zM322 192h1v1h-1zM322 162h1v1h-1zM322 132h1v1h-1zM322 102h1v1h-1zM322 72h1v1h-1zM352 792h1v1h-1zM352 762h1v1h-1zM352 732h1v1h-1zM352 702h1v1h-1zM352 672h1v1h-1zM352 642h1v1h-1zM352 612h1v1h-1zM352 582h1v1h-1zM352 552h1v1h-1zM352 522h1v1h-1zM352 492h1v1h-1zM352 462h1v1h-1zM352 432h1v1h-1zM352 402h1v1h-1zM352 372h1v1h-1zM352 342h1v1h-1zM352 312h1v1h-1zM352 282h1v1h-1zM352 252h1v1h-1zM352 222h1v1h-1zM352 192h1v1h-1zM352 162h1v1h-1zM352 132h1v1h-1zM352 102h1v1h-1zM352 72h1v1h-1zM382 792h1v1h-1zM382 762h1v1h-1zM382 732h1v1h-1zM382 702h1v1h-1zM382 672h1v1h-1zM382 642h1v1h-1zM382 612h1v1h-1zM382 582h1v1h-1zM382 552h1v1h-1zM382 522h1v1h-1zM382 492h1v1h-1zM382 462h1v1h-1zM382 432h1v1h-1zM382 402h1v1h-1zM382 372h1v1h-1zM382 342h1v1h-1zM382 312h1v1h-1zM382 282h1v1h-1zM382 252h1v1h-1zM382 222h1v1h-1zM382 192h1v1h-1zM382 162h1v1h-1zM382 132h1v1h-1zM382 102h1v1h-1zM382 72h1v1h-1zM412 792h1v1h-1zM412 762h1v1h-1zM412 732h1v1h-1zM412 702h1v1h-1zM412 672h1v1h-1zM412 642h1v1h-1zM412 612h1v1h-1zM412 582h1v1h-1zM412 552h1v1h-1zM412 522h1v1h-1zM412 492h1v1h-1zM412 462h1v1h-1zM412 432h1v1h-1zM412 402h1v1h-1zM412 372h1v1h-1zM412 342h1v1h-1zM412 312h1v1h-1zM412 282h1v1h-1zM412 252h1v1h-1zM412 222h1v1h-1zM412 192h1v1h-1zM412 162h1v1h-1zM412 132h1v1h-1zM412 102h1v1h-1zM412 72h1v1h-1zM442 792h1v1h-1zM442 762h1v1h-1zM442 732h1v1h-1zM442 702h1v1h-1zM442 672h1v1h-1zM442 642h1v1h-1zM442 612h1v1h-1zM442 582h1v1h-1zM442 552h1v1h-1zM442 522h1v1h-1zM442 492h1v1h-1zM442 462h1v1h-1zM442 432h1v1h-1zM442 402h1v1h-1zM442 372h1v1h-1zM442 342h1v1h-1zM442 312h1v1h-1zM442 282h1v1h-1zM442 252h1v1h-1zM442 222h1v1h-1zM442 192h1v1h-1zM442 162h1v1h-1zM442 132h1v1h-1zM442 102h1v1h-1zM442 72h1v1h-1zM472 792h1v1h-1zM472 762h1v1h-1zM472 732h1v1h-1zM472 702h1v1h-1zM472 672h1v1h-1zM472 642h1v1h-1zM472 612h1v1h-1zM472 582h1v1h-1zM472 552h1v1h-1zM472 522h1v1h-1zM472 492h1v1h-1zM472 462h1v1h-1zM472 432h1v1h-1zM472 402h1v1h-1zM472 372h1v1h-1zM472 342h1v1h-1zM472 312h1v1h-1zM472 282h1v1h-1zM472 252h1v1h-1zM472 222h1v1h-1zM472 192h1v1h-1zM472 162h1v1h-1zM472 132h1v1h-1zM472 102h1v1h-1zM472 72h1v1h-1zM502 792h1v1h-1zM502 762h1v1h-1zM502 732h1v1h-1zM502 702h1v1h-1zM502 672h1v1h-1zM502 642h1v1h-1zM502 612h1v1h-1zM502 582h1v1h-1zM502 552h1v1h-1zM502 522h1v1h-1zM502 492h1v1h-1zM502 462h1v1h-1zM502 432h1v1h-1zM502 402h1v1h-1zM502 372h1v1h-1zM502 342h1v1h-1zM502 312h1v1h-1zM502 282h1v1h-1zM502 252h1v1h-1zM502 222h1v1h-1zM502 192h1v1h-1zM502 162h1v1h-1zM502 132h1v1h-1zM502 102h1v1h-1zM502 72h1v1h-1zM532 792h1v1h-1zM532 762h1v1h-1zM532 732h1v1h-1zM532 702h1v1h-1zM532 672h1v1h-1zM532 642h1v1h-1zM532 612h1v1h-1zM532 582h1v1h-1zM532 552h1v1h-1zM532 522h1v1h-1zM532 492h1v1h-1zM532 462h1v1h-1zM532 432h1v1h-1zM532 402h1v1h-1zM532 372h1v1h-1zM532 342h1v1h-1zM532 312h1v1h-1zM532 282h1v1h-1zM532 252h1v1h-1zM532 222h1v1h-1zM532 192h1v1h-1zM532 162h1v1h-1zM532 132h1v1h-1zM532 102h1v1h-1zM532 72h1v1h-1zM562 792h1v1h-1zM562 762h1v1h-1zM562 732h1v1h-1zM562 702h1v1h-1zM562 672h1v1h-1zM562 642h1v1h-1zM562 612h1v1h-1zM562 582h1v1h-1zM562 552h1v1h-1zM562 522h1v1h-1zM562 492h1v1h-1zM562 462h1v1h-1zM562 432h1v1h-1zM562 402h1v1h-1zM562 372h1v1h-1zM562 342h1v1h-1zM562 312h1v1h-1zM562 282h1v1h-1zM562 252h1v1h-1zM562 222h1v1h-1zM562 192h1v1h-1zM562 162h1v1h-1zM562 132h1v1h-1zM562 102h1v1h-1zM562 72h1v1h-1zM592 792h1v1h-1zM592 762h1v1h-1zM592 732h1v1h-1zM592 702h1v1h-1zM592 672h1v1h-1zM592 642h1v1h-1zM592 612h1v1h-1zM592 582h1v1h-1zM592 552h1v1h-1zM592 522h1v1h-1zM592 492h1v1h-1zM592 462h1v1h-1zM592 432h1v1h-1zM592 402h1v1h-1zM592 372h1v1h-1zM592 342h1v1h-1zM592 312h1v1h-1zM592 282h1v1h-1zM592 252h1v1h-1zM592 222h1v1h-1zM592 192h1v1h-1zM592 162h1v1h-1zM592 132h1v1h-1zM592 102h1v1h-1zM592 72h1v1h-1zM622 792h1v1h-1zM622 762h1v1h-1zM622 732h1v1h-1zM622 702h1v1h-1zM622 672h1v1h-1zM622 642h1v1h-1zM622 612h1v1h-1zM622 582h1v1h-1zM622 552h1v1h-1zM622 522h1v1h-1zM622 492h1v1h-1zM622 462h1v1h-1zM622 432h1v1h-1zM622 402h1v1h-1zM622 372h1v1h-1zM622 342h1v1h-1zM622 312h1v1h-1zM622 282h1v1h-1zM622 252h1v1h-1zM622 222h1v1h-1zM622 192h1v1h-1zM622 162h1v1h-1zM622 132h1v1h-1zM622 102h1v1h-1zM622 72h1v1h-1zM652 792h1v1h-1zM652 762h1v1h-1zM652 732h1v1h-1zM652 702h1v1h-1zM652 672h1v1h-1zM652 642h1v1h-1zM652 612h1v1h-1zM652 582h1v1h-1zM652 552h1v1h-1zM652 522h1v1h-1zM652 492h1v1h-1zM652 462h1v1h-1zM652 432h1v1h-1zM652 402h1v1h-1zM652 372h1v1h-1zM652 342h1v1h-1zM652 312h1v1h-1zM652 282h1v1h-1zM652 252h1v1h-1zM652 222h1v1h-1zM652 192h1v1h-1zM652 162h1v1h-1zM652 132h1v1h-1zM652 102h1v1h-1zM652 72h1v1h-1zM683 792h1v1h-1zM683 762h1v1h-1zM683 732h1v1h-1zM683 702h1v1h-1zM683 672h1v1h-1zM683 642h1v1h-1zM683 612h1v1h-1zM683 582h1v1h-1zM683 552h1v1h-1zM683 522h1v1h-1zM683 492h1v1h-1zM683 462h1v1h-1zM683 432h1v1h-1zM683 402h1v1h-1zM683 372h1v1h-1zM683 342h1v1h-1zM683 312h1v1h-1zM683 282h1v1h-1zM683 252h1v1h-1zM683 222h1v1h-1zM683 192h1v1h-1zM683 162h1v1h-1zM683 132h1v1h-1zM683 102h1v1h-1zM683 72h1v1h-1zM713 792h1v1h-1zM713 762h1v1h-1zM713 732h1v1h-1zM713 702h1v1h-1zM713 672h1v1h-1zM713 642h1v1h-1zM713 612h1v1h-1zM713 582h1v1h-1zM713 552h1v1h-1zM713 522h1v1h-1zM713 492h1v1h-1zM713 462h1v1h-1zM713 432h1v1h-1zM713 402h1v1h-1zM713 372h1v1h-1zM713 342h1v1h-1zM713 312h1v1h-1zM713 282h1v1h-1zM713 252h1v1h-1zM713 222h1v1h-1zM713 192h1v1h-1zM713 162h1v1h-1zM713 132h1v1h-1zM713 102h1v1h-1zM713 72h1v1h-1zM743 792h1v1h-1zM743 762h1v1h-1zM743 732h1v1h-1zM743 702h1v1h-1zM743 672h1v1h-1zM743 642h1v1h-1zM743 612h1v1h-1zM743 582h1v1h-1zM743 552h1v1h-1zM743 522h1v1h-1zM743 492h1v1h-1zM743 462h1v1h-1zM743 432h1v1h-1zM743 402h1v1h-1zM743 372h1v1h-1zM743 342h1v1h-1zM743 312h1v1h-1zM743 282h1v1h-1zM743 252h1v1h-1zM743 222h1v1h-1zM743 192h1v1h-1zM743 162h1v1h-1zM743 132h1v1h-1zM743 102h1v1h-1zM743 72h1v1h-1zM773 792h1v1h-1zM773 762h1v1h-1zM773 732h1v1h-1zM773 702h1v1h-1zM773 672h1v1h-1zM773 642h1v1h-1zM773 612h1v1h-1zM773 582h1v1h-1zM773 552h1v1h-1zM773 522h1v1h-1zM773 492h1v1h-1zM773 462h1v1h-1zM773 432h1v1h-1zM773 402h1v1h-1zM773 372h1v1h-1zM773 342h1v1h-1zM773 312h1v1h-1zM773 282h1v1h-1zM773 252h1v1h-1zM773 222h1v1h-1zM773 192h1v1h-1zM773 162h1v1h-1zM773 132h1v1h-1zM773 102h1v1h-1zM773 72h1v1h-1zM803 792h1v1h-1zM803 762h1v1h-1zM803 732h1v1h-1zM803 702h1v1h-1zM803 672h1v1h-1zM803 642h1v1h-1zM803 612h1v1h-1zM803 582h1v1h-1zM803 552h1v1h-1zM803 522h1v1h-1zM803 492h1v1h-1zM803 462h1v1h-1zM803 432h1v1h-1zM803 402h1v1h-1zM803 372h1v1h-1zM803 342h1v1h-1zM803 312h1v1h-1zM803 282h1v1h-1zM803 252h1v1h-1zM803 222h1v1h-1zM803 192h1v1h-1zM803 162h1v1h-1zM803 132h1v1h-1zM803 102h1v1h-1zM803 72h1v1h-1zM833 792h1v1h-1zM833 762h1v1h-1zM833 732h1v1h-1zM833 702h1v1h-1zM833 672h1v1h-1zM833 642h1v1h-1zM833 612h1v1h-1zM833 582h1v1h-1zM833 552h1v1h-1zM833 522h1v1h-1zM833 492h1v1h-1zM833 462h1v1h-1zM833 432h1v1h-1zM833 402h1v1h-1zM833 372h1v1h-1zM833 342h1v1h-1zM833 312h1v1h-1zM833 282h1v1h-1zM833 252h1v1h-1zM833 222h1v1h-1zM833 192h1v1h-1zM833 162h1v1h-1zM833 132h1v1h-1zM833 102h1v1h-1zM833 72h1v1h-1zM863 792h1v1h-1zM863 762h1v1h-1zM863 732h1v1h-1zM863 702h1v1h-1zM863 672h1v1h-1zM863 642h1v1h-1zM863 612h1v1h-1zM863 582h1v1h-1zM863 552h1v1h-1zM863 522h1v1h-1zM863 492h1v1h-1zM863 462h1v1h-1zM863 432h1v1h-1zM863 402h1v1h-1zM863 372h1v1h-1zM863 342h1v1h-1zM863 312h1v1h-1zM863 282h1v1h-1zM863 252h1v1h-1zM863 222h1v1h-1zM863 192h1v1h-1zM863 162h1v1h-1zM863 132h1v1h-1zM863 102h1v1h-1zM863 72h1v1h-1zM893 792h1v1h-1zM893 762h1v1h-1zM893 732h1v1h-1zM893 702h1v1h-1zM893 672h1v1h-1zM893 642h1v1h-1zM893 612h1v1h-1zM893 582h1v1h-1zM893 552h1v1h-1zM893 522h1v1h-1zM893 492h1v1h-1zM893 462h1v1h-1zM893 432h1v1h-1zM893 402h1v1h-1zM893 372h1v1h-1zM893 342h1v1h-1zM893 312h1v1h-1zM893 282h1v1h-1zM893 252h1v1h-1zM893 222h1v1h-1zM893 192h1v1h-1zM893 162h1v1h-1zM893 132h1v1h-1zM893 102h1v1h-1zM893 72h1v1h-1zM923 792h1v1h-1zM923 762h1v1h-1zM923 732h1v1h-1zM923 702h1v1h-1zM923 672h1v1h-1zM923 642h1v1h-1zM923 612h1v1h-1zM923 582h1v1h-1zM923 552h1v1h-1zM923 522h1v1h-1zM923 492h1v1h-1zM923 462h1v1h-1zM923 432h1v1h-1zM923 402h1v1h-1zM923 372h1v1h-1zM923 342h1v1h-1zM923 312h1v1h-1zM923 282h1v1h-1zM923 252h1v1h-1zM923 222h1v1h-1zM923 192h1v1h-1zM923 162h1v1h-1zM923 132h1v1h-1zM923 102h1v1h-1zM923 72h1v1h-1zM953 792h1v1h-1zM953 762h1v1h-1zM953 732h1v1h-1zM953 702h1v1h-1zM953 672h1v1h-1zM953 642h1v1h-1zM953 612h1v1h-1zM953 582h1v1h-1zM953 552h1v1h-1zM953 522h1v1h-1zM953 492h1v1h-1zM953 462h1v1h-1zM953 432h1v1h-1zM953 402h1v1h-1zM953 372h1v1h-1zM953 342h1v1h-1zM953 312h1v1h-1zM953 282h1v1h-1zM953 252h1v1h-1zM953 222h1v1h-1zM953 192h1v1h-1zM953 162h1v1h-1zM953 132h1v1h-1zM953 102h1v1h-1zM953 72h1v1h-1zM983 792h1v1h-1zM983 762h1v1h-1zM983 732h1v1h-1zM983 702h1v1h-1zM983 672h1v1h-1zM983 642h1v1h-1zM983 612h1v1h-1zM983 582h1v1h-1zM983 552h1v1h-1zM983 522h1v1h-1zM983 492h1v1h-1zM983 462h1v1h-1zM983 432h1v1h-1zM983 402h1v1h-1zM983 372h1v1h-1zM983 342h1v1h-1zM983 312h1v1h-1zM983 282h1v1h-1zM983 252h1v1h-1zM983 222h1v1h-1zM983 192h1v1h-1zM983 162h1v1h-1zM983 132h1v1h-1zM983 102h1v1h-1zM983 72h1v1h-1zM1013 792h1v1h-1zM1013 762h1v1h-1zM1013 732h1v1h-1zM1013 702h1v1h-1zM1013 672h1v1h-1zM1013 642h1v1h-1zM1013 612h1v1h-1zM1013 582h1v1h-1zM1013 552h1v1h-1zM1013 522h1v1h-1zM1013 492h1v1h-1zM1013 462h1v1h-1zM1013 432h1v1h-1zM1013 402h1v1h-1zM1013 372h1v1h-1zM1013 342h1v1h-1zM1013 312h1v1h-1zM1013 282h1v1h-1zM1013 252h1v1h-1zM1013 222h1v1h-1zM1013 192h1v1h-1zM1013 162h1v1h-1zM1013 132h1v1h-1zM1013 102h1v1h-1zM1013 72h1v1h-1zM1043 792h1v1h-1zM1043 762h1v1h-1zM1043 732h1v1h-1zM1043 702h1v1h-1zM1043 672h1v1h-1zM1043 642h1v1h-1zM1043 612h1v1h-1zM1043 582h1v1h-1zM1043 552h1v1h-1zM1043 522h1v1h-1zM1043 492h1v1h-1zM1043 462h1v1h-1zM1043 432h1v1h-1zM1043 402h1v1h-1zM1043 372h1v1h-1zM1043 342h1v1h-1zM1043 312h1v1h-1zM1043 282h1v1h-1zM1043 252h1v1h-1zM1043 222h1v1h-1zM1043 192h1v1h-1zM1043 162h1v1h-1zM1043 132h1v1h-1zM1043 102h1v1h-1zM1043 72h1v1h-1zM1073 792h1v1h-1zM1073 762h1v1h-1zM1073 732h1v1h-1zM1073 702h1v1h-1zM1073 672h1v1h-1zM1073 642h1v1h-1zM1073 612h1v1h-1zM1073 582h1v1h-1zM1073 552h1v1h-1zM1073 522h1v1h-1zM1073 492h1v1h-1zM1073 462h1v1h-1zM1073 432h1v1h-1zM1073 402h1v1h-1zM1073 372h1v1h-1zM1073 342h1v1h-1zM1073 312h1v1h-1zM1073 282h1v1h-1zM1073 252h1v1h-1zM1073 222h1v1h-1zM1073 192h1v1h-1zM1073 162h1v1h-1zM1073 132h1v1h-1zM1073 102h1v1h-1zM1073 72h1v1h-1zM1104 792h1v1h-1zM1104 762h1v1h-1zM1104 732h1v1h-1zM1104 702h1v1h-1zM1104 672h1v1h-1zM1104 642h1v1h-1zM1104 612h1v1h-1zM1104 582h1v1h-1zM1104 552h1v1h-1zM1104 522h1v1h-1zM1104 492h1v1h-1zM1104 462h1v1h-1zM1104 432h1v1h-1zM1104 402h1v1h-1zM1104 372h1v1h-1zM1104 342h1v1h-1zM1104 312h1v1h-1zM1104 282h1v1h-1zM1104 252h1v1h-1zM1104 222h1v1h-1zM1104 192h1v1h-1zM1104 162h1v1h-1zM1104 132h1v1h-1zM1104 102h1v1h-1zM1104 72h1v1h-1zM1134 792h1v1h-1zM1134 762h1v1h-1zM1134 732h1v1h-1zM1134 702h1v1h-1zM1134 672h1v1h-1zM1134 642h1v1h-1zM1134 612h1v1h-1zM1134 582h1v1h-1zM1134 552h1v1h-1zM1134 522h1v1h-1zM1134 492h1v1h-1zM1134 462h1v1h-1zM1134 432h1v1h-1zM1134 402h1v1h-1zM1134 372h1v1h-1zM1134 342h1v1h-1zM1134 312h1v1h-1zM1134 282h1v1h-1zM1134 252h1v1h-1zM1134 222h1v1h-1zM1134 192h1v1h-1zM1134 162h1v1h-1zM1134 132h1v1h-1zM1134 102h1v1h-1zM1134 72h1v1h-1zM1164 792h1v1h-1zM1164 762h1v1h-1zM1164 732h1v1h-1zM1164 702h1v1h-1zM1164 672h1v1h-1zM1164 642h1v1h-1zM1164 612h1v1h-1zM1164 582h1v1h-1zM1164 552h1v1h-1zM1164 522h1v1h-1zM1164 492h1v1h-1zM1164 462h1v1h-1zM1164 432h1v1h-1zM1164 402h1v1h-1zM1164 372h1v1h-1zM1164 342h1v1h-1zM1164 312h1v1h-1zM1164 282h1v1h-1zM1164 252h1v1h-1zM1164 222h1v1h-1zM1164 192h1v1h-1zM1164 162h1v1h-1zM1164 132h1v1h-1zM1164 102h1v1h-1zM1164 72h1v1h-1zM1194 792h1v1h-1zM1194 762h1v1h-1zM1194 732h1v1h-1zM1194 702h1v1h-1zM1194 672h1v1h-1zM1194 642h1v1h-1zM1194 612h1v1h-1zM1194 582h1v1h-1zM1194 552h1v1h-1zM1194 522h1v1h-1zM1194 492h1v1h-1zM1194 462h1v1h-1zM1194 432h1v1h-1zM1194 402h1v1h-1zM1194 372h1v1h-1zM1194 342h1v1h-1zM1194 312h1v1h-1zM1194 282h1v1h-1zM1194 252h1v1h-1zM1194 222h1v1h-1zM1194 192h1v1h-1zM1194 162h1v1h-1zM1194 132h1v1h-1zM1194 102h1v1h-1zM1194 72h1v1h-1zM1224 792h1v1h-1zM1224 762h1v1h-1zM1224 732h1v1h-1zM1224 702h1v1h-1zM1224 672h1v1h-1zM1224 642h1v1h-1zM1224 612h1v1h-1zM1224 582h1v1h-1zM1224 552h1v1h-1zM1224 522h1v1h-1zM1224 492h1v1h-1zM1224 462h1v1h-1zM1224 432h1v1h-1zM1224 402h1v1h-1zM1224 372h1v1h-1zM1224 342h1v1h-1zM1224 312h1v1h-1zM1224 282h1v1h-1zM1224 252h1v1h-1zM1224 222h1v1h-1zM1224 192h1v1h-1zM1224 162h1v1h-1zM1224 132h1v1h-1zM1224 102h1v1h-1zM1224 72h1v1h-1zM1254 792h1v1h-1zM1254 762h1v1h-1zM1254 732h1v1h-1zM1254 702h1v1h-1zM1254 672h1v1h-1zM1254 642h1v1h-1zM1254 612h1v1h-1zM1254 582h1v1h-1zM1254 552h1v1h-1zM1254 522h1v1h-1zM1254 492h1v1h-1zM1254 462h1v1h-1zM1254 432h1v1h-1zM1254 402h1v1h-1zM1254 372h1v1h-1zM1254 342h1v1h-1zM1254 312h1v1h-1zM1254 282h1v1h-1zM1254 252h1v1h-1zM1254 222h1v1h-1zM1254 192h1v1h-1zM1254 162h1v1h-1zM1254 132h1v1h-1zM1254 102h1v1h-1zM1254 72h1v1h-1zM1284 792h1v1h-1zM1284 762h1v1h-1zM1284 732h1v1h-1zM1284 702h1v1h-1zM1284 672h1v1h-1zM1284 642h1v1h-1zM1284 612h1v1h-1zM1284 582h1v1h-1zM1284 552h1v1h-1zM1284 522h1v1h-1zM1284 492h1v1h-1zM1284 462h1v1h-1zM1284 432h1v1h-1zM1284 402h1v1h-1zM1284 372h1v1h-1zM1284 342h1v1h-1zM1284 312h1v1h-1zM1284 282h1v1h-1zM1284 252h1v1h-1zM1284 222h1v1h-1zM1284 192h1v1h-1zM1284 162h1v1h-1zM1284 132h1v1h-1zM1284 102h1v1h-1zM1284 72h1v1h-1zM1314 792h1v1h-1zM1314 762h1v1h-1zM1314 732h1v1h-1zM1314 702h1v1h-1zM1314 672h1v1h-1zM1314 642h1v1h-1zM1314 612h1v1h-1zM1314 582h1v1h-1zM1314 552h1v1h-1zM1314 522h1v1h-1zM1314 492h1v1h-1zM1314 462h1v1h-1zM1314 432h1v1h-1zM1314 402h1v1h-1zM1314 372h1v1h-1zM1314 342h1v1h-1zM1314 312h1v1h-1zM1314 282h1v1h-1zM1314 252h1v1h-1zM1314 222h1v1h-1zM1314 192h1v1h-1zM1314 162h1v1h-1zM1314 132h1v1h-1zM1314 102h1v1h-1zM1314 72h1v1h-1zM1344 792h1v1h-1zM1344 762h1v1h-1zM1344 732h1v1h-1zM1344 702h1v1h-1zM1344 672h1v1h-1zM1344 642h1v1h-1zM1344 612h1v1h-1zM1344 582h1v1h-1zM1344 552h1v1h-1zM1344 522h1v1h-1zM1344 492h1v1h-1zM1344 462h1v1h-1zM1344 432h1v1h-1zM1344 402h1v1h-1zM1344 372h1v1h-1zM1344 342h1v1h-1zM1344 312h1v1h-1zM1344 282h1v1h-1zM1344 252h1v1h-1zM1344 222h1v1h-1zM1344 192h1v1h-1zM1344 162h1v1h-1zM1344 132h1v1h-1zM1344 102h1v1h-1zM1344 72h1v1h-1zM1374 792h1v1h-1zM1374 762h1v1h-1zM1374 732h1v1h-1zM1374 702h1v1h-1zM1374 672h1v1h-1zM1374 642h1v1h-1zM1374 612h1v1h-1zM1374 582h1v1h-1zM1374 552h1v1h-1zM1374 522h1v1h-1zM1374 492h1v1h-1zM1374 462h1v1h-1zM1374 432h1v1h-1zM1374 402h1v1h-1zM1374 372h1v1h-1zM1374 342h1v1h-1zM1374 312h1v1h-1zM1374 282h1v1h-1zM1374 252h1v1h-1zM1374 222h1v1h-1zM1374 192h1v1h-1zM1374 162h1v1h-1zM1374 132h1v1h-1zM1374 102h1v1h-1zM1374 72h1v1h-1z"/>
<path fill="#303030" d="M9 792h8v1h-8zM9 762h13v1h-13zM9 732h8v1h-8zM9 702h8v1h-8zM9 672h8v1h-8zM9 642h8v1h-8zM9 612h13v1h-13zM9 582h8v1h-8zM9 552h8v1h-8zM9 522h8v1h-8zM9 492h8v1h-8zM9 462h13v1h-13zM9 432h8v1h-8zM9 402h8v1h-8zM9 372h8v1h-8zM9 342h8v1h-8zM9 312h13v1h-13zM9 282h8v1h-8zM9 252h8v1h-8zM9 222h8v1h-8zM9 192h8v1h-8zM9 162h13v1h-13zM9 132h8v1h-8zM9 102h8v1h-8zM9 72h8v1h-8z"/>
<path fill="#303030" d="M22 63h1v8h-1zM52 63h1v8h-1zM82 63h1v12h-1zM112 63h1v8h-1zM142 63h1v8h-1zM172 63h1v8h-1zM203 63h1v8h-1zM233 63h1v12h-1zM263 63h1v8h-1zM293 63h1v8h-1zM323 63h1v8h-1zM353 63h1v8h-1zM383 63h1v12h-1zM413 63h1v8h-1zM443 63h1v8h-1zM473 63h1v8h-1zM503 63h1v8h-1zM533 63h1v12h-1zM563 63h1v8h-1zM593 63h1v8h-1zM623 63h1v8h-1zM653 63h1v8h-1zM683 63h1v12h-1zM713 63h1v8h-1zM743 63h1v8h-1zM773 63h1v8h-1zM803 63h1v8h-1zM833 63h1v12h-1zM863 63h1v8h-1zM893 63h1v8h-1zM923 63h1v8h-1zM953 63h1v8h-1zM983 63h1v12h-1zM1013 63h1v8h-1zM1043 63h1v8h-1zM1073 63h1v8h-1zM1103 63h1v8h-1zM1133 63h1v12h-1zM1163 63h1v8h-1zM1194 63h1v8h-1zM1224 63h1v8h-1zM1254 63h1v8h-1zM1284 63h1v12h-1zM1314 63h1v8h-1zM1344 63h1v8h-1zM1374 63h1v8h-1z"/>
<path fill="#404040" d="M82 805h1v13h-1zM112 810h1v8h-1zM142 810h1v8h-1zM172 810h1v8h-1zM203 810h1v8h-1zM233 805h1v13h-1zM263 810h1v8h-1zM293 810h1v8h-1zM323 810h1v8h-1zM353 810h1v8h-1zM383 805h1v13h-1zM413 810h1v8h-1zM443 810h1v8h-1zM473 810h1v8h-1zM503 810h1v8h-1zM533 805h1v13h-1zM563 810h1v8h-1zM593 810h1v8h-1zM623 810h1v8h-1zM653 810h1v8h-1zM683 805h1v13h-1zM713 810h1v8h-1zM743 810h1v8h-1zM773 810h1v8h-1zM803 810h1v8h-1zM833 805h1v13h-1zM863 810h1v8h-1zM893 810h1v8h-1zM923 810h1v8h-1zM953 810h1v8h-1zM983 805h1v13h-1zM1013 810h1v8h-1zM1043 810h1v8h-1zM1073 810h1v8h-1zM1103 810h1v8h-1zM1133 805h1v13h-1zM1163 810h1v8h-1zM1194 810h1v8h-1zM1224 810h1v8h-1zM1254 810h1v8h-1zM1284 805h1v13h-1zM1314 810h1v8h-1zM1344 810h1v8h-1zM1374 810h1v8h-1z"/>
<rect x="9" y="818" width="1383" height="1" fill="#5a5a5a"/>
<text x="80.9" y="808" font-family="Liberation Sans" font-size="15.3" text-anchor="middle" fill="#000">-20,0</text>
<text x="231.0" y="808" font-family="Liberation Sans" font-size="15.3" text-anchor="middle" fill="#000">-15,0</text>
<text x="381.2" y="808" font-family="Liberation Sans" font-size="15.3" text-anchor="middle" fill="#000">-10,0</text>
<text x="531.4" y="808" font-family="Liberation Sans" font-size="15.3" text-anchor="middle" fill="#000">-5,0</text>
<text x="683.0" y="808" font-family="Liberation Sans" font-size="15.3" text-anchor="middle" fill="#000">0,0</text>
<text x="833.1" y="808" font-family="Liberation Sans" font-size="15.3" text-anchor="middle" fill="#000">5,0</text>
<text x="983.3" y="808" font-family="Liberation Sans" font-size="15.3" text-anchor="middle" fill="#000">10,0</text>
<text x="1133.5" y="808" font-family="Liberation Sans" font-size="15.3" text-anchor="middle" fill="#000">15,0</text>
<text x="1283.6" y="808" font-family="Liberation Sans" font-size="15.3" text-anchor="middle" fill="#000">20,0</text>
<text transform="translate(38 462) rotate(-90)" font-family="Liberation Sans" font-size="15" text-anchor="middle" fill="#000">5,0</text>
<text transform="translate(38 612) rotate(-90)" font-family="Liberation Sans" font-size="15" text-anchor="middle" fill="#000">0,0</text>
<text transform="translate(38 762) rotate(-90)" font-family="Liberation Sans" font-size="15" text-anchor="middle" fill="#000">-5,0</text>
<rect x="833" y="409" width="150" height="203" fill="#c9d5e6"/>
<rect x="844.5" y="420.5" width="128" height="180" fill="none" stroke="#8e8c2c" stroke-width="1.3" shape-rendering="auto"/>
<path fill="#111" shape-rendering="auto" d="M833 409h1.2v203h-1.2zM863 409h1.2v203h-1.2zM893 409h1.2v203h-1.2zM923 409h1.2v203h-1.2zM953 409h1.2v203h-1.2zM983 409h1.2v203h-1.2zM833 409h151v1.2h-151zM833 438h151v1.2h-151zM833 467h151v1.2h-151zM833 496h151v1.2h-151zM833 525h151v1.2h-151zM833 554h151v1.2h-151zM833 583h151v1.2h-151z"/>
<rect x="832.7" y="408.7" width="2" height="2" fill="#f01818"/><rect x="832.7" y="437.7" width="2" height="2" fill="#f01818"/><rect x="832.7" y="466.7" width="2" height="2" fill="#f01818"/><rect x="832.7" y="495.7" width="2" height="2" fill="#f01818"/><rect x="832.7" y="524.7" width="2" height="2" fill="#f01818"/><rect x="832.7" y="553.7" width="2" height="2" fill="#f01818"/><rect x="832.7" y="582.7" width="2" height="2" fill="#f01818"/><rect x="862.7" y="408.7" width="2" height="2" fill="#f01818"/><rect x="862.7" y="437.7" width="2" height="2" fill="#f01818"/><rect x="862.7" y="466.7" width="2" height="2" fill="#f01818"/><rect x="862.7" y="495.7" width="2" height="2" fill="#f01818"/><rect x="862.7" y="524.7" width="2" height="2" fill="#f01818"/><rect x="862.7" y="553.7" width="2" height="2" fill="#f01818"/><rect x="862.7" y="582.7" width="2" height="2" fill="#f01818"/><rect x="892.7" y="408.7" width="2" height="2" fill="#f01818"/><rect x="892.7" y="437.7" width="2" height="2" fill="#f01818"/><rect x="892.7" y="466.7" width="2" height="2" fill="#f01818"/><rect x="892.7" y="495.7" width="2" height="2" fill="#f01818"/><rect x="892.7" y="524.7" width="2" height="2" fill="#f01818"/><rect x="892.7" y="553.7" width="2" height="2" fill="#f01818"/><rect x="892.7" y="582.7" width="2" height="2" fill="#f01818"/><rect x="922.7" y="408.7" width="2" height="2" fill="#f01818"/><rect x="922.7" y="437.7" width="2" height="2" fill="#f01818"/><rect x="922.7" y="466.7" width="2" height="2" fill="#f01818"/><rect x="922.7" y="495.7" width="2" height="2" fill="#f01818"/><rect x="922.7" y="524.7" width="2" height="2" fill="#f01818"/><rect x="922.7" y="553.7" width="2" height="2" fill="#f01818"/><rect x="922.7" y="582.7" width="2" height="2" fill="#f01818"/><rect x="952.7" y="408.7" width="2" height="2" fill="#f01818"/><rect x="952.7" y="437.7" width="2" height="2" fill="#f01818"/><rect x="952.7" y="466.7" width="2" height="2" fill="#f01818"/><rect x="952.7" y="495.7" width="2" height="2" fill="#f01818"/><rect x="952.7" y="524.7" width="2" height="2" fill="#f01818"/><rect x="952.7" y="553.7" width="2" height="2" fill="#f01818"/><rect x="952.7" y="582.7" width="2" height="2" fill="#f01818"/><rect x="982.7" y="408.7" width="2" height="2" fill="#f01818"/><rect x="982.7" y="437.7" width="2" height="2" fill="#f01818"/><rect x="982.7" y="466.7" width="2" height="2" fill="#f01818"/><rect x="982.7" y="495.7" width="2" height="2" fill="#f01818"/><rect x="982.7" y="524.7" width="2" height="2" fill="#f01818"/><rect x="982.7" y="553.7" width="2" height="2" fill="#f01818"/><rect x="982.7" y="582.7" width="2" height="2" fill="#f01818"/>
<path d="M827.5 612.5 L989.5 612.5 L990.5 626 L826.5 626 Z" fill="#7aabe6" stroke="#3c70b6" stroke-width="1.2" stroke-linejoin="round" shape-rendering="auto"/>
<g stroke="#8b1c24" stroke-width="1.2" shape-rendering="auto" fill="none"><path d="M833.5 612V676M983.5 612V676M828 672.5H989M828 678L839 667M979 678L989 668"/></g>
<text x="908" y="670" font-family="Liberation Sans" font-size="19" text-anchor="middle" fill="#8b0c0c">5.00</text>
<path fill="#6c7cf5" d="M833 612h2v1h-2zM833 582h2v1h-2zM833 552h2v1h-2zM833 522h2v1h-2zM833 492h2v1h-2zM833 462h2v1h-2zM833 432h2v1h-2zM833 402h2v1h-2zM863 612h2v1h-2zM863 582h2v1h-2zM863 552h2v1h-2zM863 522h2v1h-2zM863 492h2v1h-2zM863 462h2v1h-2zM863 432h2v1h-2zM863 402h2v1h-2zM893 612h2v1h-2zM893 582h2v1h-2zM893 552h2v1h-2zM893 522h2v1h-2zM893 492h2v1h-2zM893 462h2v1h-2zM893 432h2v1h-2zM893 402h2v1h-2zM923 612h2v1h-2zM923 582h2v1h-2zM923 552h2v1h-2zM923 522h2v1h-2zM923 492h2v1h-2zM923 462h2v1h-2zM923 432h2v1h-2zM923 402h2v1h-2zM953 612h2v1h-2zM953 582h2v1h-2zM953 552h2v1h-2zM953 522h2v1h-2zM953 492h2v1h-2zM953 462h2v1h-2zM953 432h2v1h-2zM953 402h2v1h-2zM983 612h2v1h-2zM983 582h2v1h-2zM983 552h2v1h-2zM983 522h2v1h-2zM983 492h2v1h-2zM983 462h2v1h-2zM983 432h2v1h-2zM983 402h2v1h-2z"/>
</svg>
<!-- combo -->
<div class="a" style="left:650px;top:794px;width:312px;height:25px;background:linear-gradient(#fdfdfd,#f3f3f3 50%,#dedede)"></div>
<div class="a" style="left:913px;top:795px;width:1px;height:23px;background:#777"></div>
<div class="a" style="left:938px;top:795px;width:1px;height:23px;background:#777"></div>
<div class="a" style="left:656px;top:799px;font-size:14px;font-weight:bold;color:#000">m</div>
<svg class="a" style="left:914px;top:795px" width="48" height="23"><path d="M5.5 14.5H18.5L12 8Z" fill="#505050"/><path d="M29.5 9H42.5L36 15.5Z" fill="#505050"/></svg>
<!-- axis widget -->
<svg class="a" style="left:10px;top:699px" width="120" height="120">
<path d="M1 117V1H117" stroke="#f4f4f4" stroke-width="2" fill="none"/>
<path d="M117 1V117H1" stroke="#4a4a4a" stroke-width="2.5" fill="none"/>
<rect x="91" y="3" width="24" height="24" fill="#d3e0f2"/>
<path d="M91.5 27V3.5H115" stroke="#e4e4e4" stroke-width="1.5" fill="none"/><path d="M114.5 3V26.5H91" stroke="#4a4a4a" stroke-width="2" fill="none"/>
<path d="M93.5 22.5L102 5.5L111.5 22.5Z" fill="#dce7f5" stroke="#fff" stroke-width="1.6"/><path d="M93.5 22.5L102 5.5L111.5 22.5Z" fill="none" stroke="#222" stroke-width="0.7"/>
<rect x="91" y="91" width="24" height="24" fill="#d3e0f2"/>
<path d="M91.5 115V91.5H115" stroke="#e4e4e4" stroke-width="1.5" fill="none"/><path d="M114.5 91V114.5H91" stroke="#4a4a4a" stroke-width="2" fill="none"/>
<path d="M93 93L102.5 111L112 93Z" fill="#dce7f5" stroke="#fff" stroke-width="1.6"/><path d="M93 93L102.5 111L112 93Z" fill="none" stroke="#222" stroke-width="0.7"/>
<rect x="53.5" y="38" width="27" height="27" fill="none" stroke="#2a8a2a" stroke-width="1.2"/>
<path d="M44.5 73V45" stroke="#ee3a44" stroke-width="6"/><path d="M37 47L44.5 31L52 47Z" fill="#ee3a44"/>
<path d="M45 73H72" stroke="#3a3af5" stroke-width="6"/><path d="M69.5 65.5L89 73L69.5 81Z" fill="#3a3af5"/>
<text x="43.5" y="30" font-family="Liberation Sans" font-size="19" fill="#ff1010" stroke="#ff1010" stroke-width="0.5">Z</text>
<text x="88" y="74" font-family="Liberation Sans" font-size="19" fill="#1010ff" stroke="#1010ff" stroke-width="0.6">X</text>
<text x="44.5" y="74" font-family="Liberation Sans" font-size="19" fill="#108010" stroke="#108010" stroke-width="0.5">Y</text>
</svg>
<!-- toolbar -->
<svg class="a" style="left:9px;top:820px" width="232" height="21">
<g fill="#ececec" stroke="#bdbdbd" stroke-width="1">
<rect x="0.5" y="0.5" width="27" height="19"/><rect x="30.5" y="0.5" width="27" height="19"/><rect x="60.5" y="0.5" width="27" height="19"/><rect x="120.5" y="0.5" width="27" height="19"/><rect x="150.5" y="0.5" width="27" height="19"/><rect x="210.5" y="0.5" width="27" height="19"/>
</g>
<g fill="#ececec" stroke="#1c5fa8" stroke-width="1.2"><rect x="90.5" y="0.5" width="27" height="19"/><rect x="180.5" y="0.5" width="27" height="19"/></g>
<text x="4" y="12" font-family="Liberation Sans" font-weight="bold" font-size="12" fill="#2a8ae8">n</text><rect x="13" y="9" width="5" height="5" fill="#ffff00"/><path d="M18 11H26M9 17L14 12" stroke="#333" stroke-width="1.3"/>
<text x="40" y="12" font-family="Liberation Sans" font-weight="bold" font-size="12" fill="#2a8ae8">n</text><rect x="35" y="13" width="18" height="4" fill="#ffff00" stroke="#222" stroke-width="0.6"/>
<text x="62" y="9" font-family="Liberation Sans" font-weight="bold" font-size="10.5" fill="#2a8ae8">N12</text><path d="M63 17L69 11.5H85L79 17Z" fill="#ffff00" stroke="#111" stroke-width="1.3"/><path d="M79 17.5L85 12V13.5L80 18Z" fill="#555"/>
<path d="M97 9.5L104 3L111 9.5Z" fill="#ffff00" stroke="#111" stroke-width="1.1"/><path d="M95 11.5H113" stroke="#111" stroke-width="2"/><path d="M96 14H112" stroke="#888" stroke-width="1"/><path d="M98 17.5L99 15.5M102 17.5L103 15.5M106 17.5L107 15.5" stroke="#111" stroke-width="1.2"/>
<path d="M127 15.5V6L131 3V12Z" fill="#ffff00" stroke="#777" stroke-width="0.6"/><path d="M127 16.5L133 11H145L139 16.5Z" fill="#ffff00"/><path d="M127 16.5H139L145 11" stroke="#111" stroke-width="1.3" fill="none"/>
<path d="M163 2V11.5H173" stroke="#222" stroke-width="2" fill="none"/><path d="M163 11.5L156 17.5" stroke="#333" stroke-width="2.2"/><path d="M163 11.5L156 17.5" stroke="#ffff00" stroke-width="1"/>
<path d="M184 15.5L190 10H205L199 15.5Z" fill="#ffff00" stroke="#111" stroke-width="1.5"/><path d="M199 16L205 10.5V12L200 17Z" fill="#333"/>
<path d="M213 12H232V16H213Z" fill="#ffff00" stroke="#777" stroke-width="0.6"/><path d="M214 13.5h2M219 13.5h2M224 13.5h2" stroke="#aaa" stroke-width="1"/><path d="M213 17.5H232" stroke="#444" stroke-width="1.2"/>
</svg>

<!-- MAIN WINDOW -->
<div class="a" id="win"></div>
<div class="a" id="winbot"></div>
<div class="a" id="winright"></div>
<svg class="a" style="left:18px;top:20px" width="20" height="20">
<rect x="0" y="0" width="20" height="20" fill="#c8c8c8"/>
<rect x="0" y="1" width="17" height="12" fill="#898989"/>
<rect x="0" y="1" width="17" height="1.5" fill="#000"/>
<rect x="15.5" y="1" width="1.5" height="5" fill="#000"/>
<rect x="2" y="5.5" width="9" height="1.5" fill="#0000ff"/>
<rect x="0" y="12" width="5.5" height="2" fill="#000"/>
<rect x="0" y="17" width="1.5" height="2" fill="#000"/>
<rect x="14" y="6" width="1.5" height="9.5" fill="#0000ff"/>
<rect x="11" y="15.5" width="4" height="3.5" fill="#0000ff"/>
<path d="M4.5 18.5L16.5 4.5" stroke="#000" stroke-width="3.2"/>
<path d="M4.5 18.5L16.5 4.5" stroke="#fff" stroke-width="1.3"/>
<circle cx="8" cy="13.5" r="1.8" fill="none" stroke="#f00" stroke-width="1.2"/>
<rect x="2" y="15" width="4" height="4" fill="#ff0000"/>
<path d="M18 7.5L20 10.3L18 13L16 10.3Z" fill="#ff0000"/>
<path d="M12 10.5H17" stroke="#f00" stroke-width="1"/>
</svg>

<div class="a" id="title">Reduced results for panels - Case: 1 (DL1)</div>
<div class="wb" style="left:1218px"><div class="a" style="left:11px;top:9px;width:17px;height:6px;background:#fff;border:1px solid #3e4a60;border-radius:1px"></div></div>
<div class="wb" style="left:1262px"><svg class="a" style="left:0;top:0" width="40" height="22"><rect x="11.5" y="3.5" width="16" height="14" rx="1" fill="#f4f4f4" stroke="#3e4a60"/><rect x="14.5" y="6.5" width="10" height="8" fill="#a9c0db" stroke="#3e4a60"/></svg></div>
<div class="wb" id="wclose" style="left:1306px"><svg class="a" style="left:10px;top:3px" width="20" height="17"><path d="M5 4.5L15 12.5M15 4.5L5 12.5" stroke="#3a3a48" stroke-width="6.2" stroke-linecap="round"/><path d="M5 4.5L15 12.5M15 4.5L5 12.5" stroke="#ececec" stroke-width="4.2" stroke-linecap="round"/></svg></div>
<div class="a" id="client"></div>
<div class="hd" style="left:19px;top:48px;width:207px;height:38px;line-height:35px">Panel/Cut/Case</div>
<div class="hd" style="left:226px;top:48px;width:108px;height:38px;line-height:35px">NRx (kN)</div>
<div class="hd" style="left:334px;top:48px;width:108px;height:38px;line-height:35px">MRz (kNm)</div>
<div class="hd" style="left:442px;top:48px;width:108px;height:38px;line-height:35px">TRy (kN)</div>
<div class="hd" style="left:550px;top:48px;width:108px;height:38px;line-height:35px">sRo (MPa)</div>
<div class="hd" style="left:658px;top:48px;width:108px;height:38px;line-height:35px">sRe (MPa)</div>
<div class="hd" style="left:766px;top:48px;width:108px;height:38px;line-height:35px">tR (MPa)</div>
<div class="hd" style="left:874px;top:48px;width:108px;height:38px;line-height:35px">TRz (kN)</div>
<div class="hd" style="left:982px;top:48px;width:108px;height:38px;line-height:35px">MRy (kNm)</div>
<div class="hd" style="left:1090px;top:48px;width:108px;height:38px;line-height:35px">Cut length (m)</div>
<div class="rh" style="left:19px;top:86px;width:207px;height:19px;line-height:17px"><span class="a" style="left:34px">1/</span><span class="a" style="left:70px">4-3/</span><span class="a" style="left:106px">1</span></div>
<div class="dc" style="left:226px;top:86px;width:108px;height:19px;line-height:19px">-156,03</div>
<div class="dc" style="left:334px;top:86px;width:108px;height:19px;line-height:19px">0,00</div>
<div class="dc" style="left:442px;top:86px;width:108px;height:19px;line-height:19px">0,00</div>
<div class="dc" style="left:550px;top:86px;width:108px;height:19px;line-height:19px">-0,16</div>
<div class="dc" style="left:658px;top:86px;width:108px;height:19px;line-height:19px">-0,16</div>
<div class="dc" style="left:766px;top:86px;width:108px;height:19px;line-height:19px">0,00</div>
<div class="dc" style="left:874px;top:86px;width:108px;height:19px;line-height:19px">0,0</div>
<div class="dc" style="left:982px;top:86px;width:108px;height:19px;line-height:19px">0,0</div>
<div class="dc" style="left:1090px;top:86px;width:108px;height:19px;line-height:19px">5,00</div>
<div class="rh" style="left:19px;top:105px;width:207px;height:19px;line-height:17px"><span class="a" style="left:34px">1/</span><span class="a" style="left:70px">4~1-3~2/</span><span class="a" style="left:142px">1</span></div>
<div class="dc" style="left:226px;top:105px;width:108px;height:19px;line-height:19px">-82,88</div>
<div class="dc" style="left:334px;top:105px;width:108px;height:19px;line-height:19px">0,00</div>
<div class="dc" style="left:442px;top:105px;width:108px;height:19px;line-height:19px">0,00</div>
<div class="dc" style="left:550px;top:105px;width:108px;height:19px;line-height:19px">-0,08</div>
<div class="dc" style="left:658px;top:105px;width:108px;height:19px;line-height:19px">-0,08</div>
<div class="dc" style="left:766px;top:105px;width:108px;height:19px;line-height:19px">0,00</div>
<div class="dc" style="left:874px;top:105px;width:108px;height:19px;line-height:19px">0,0</div>
<div class="dc" style="left:982px;top:105px;width:108px;height:19px;line-height:19px">0,0</div>
<div class="dc" style="left:1090px;top:105px;width:108px;height:19px;line-height:19px">5,00</div>
<div class="rh" style="left:19px;top:124px;width:207px;height:19px;line-height:17px"><span class="a" style="left:34px">1/</span><span class="a" style="left:70px">1-2/</span><span class="a" style="left:106px">1</span></div>
<div class="dc" style="left:226px;top:124px;width:108px;height:19px;line-height:19px">-11,75</div>
<div class="dc" style="left:334px;top:124px;width:108px;height:19px;line-height:19px">-0,00</div>
<div class="dc" style="left:442px;top:124px;width:108px;height:19px;line-height:19px">-0,00</div>
<div class="dc" style="left:550px;top:124px;width:108px;height:19px;line-height:19px">-0,01</div>
<div class="dc" style="left:658px;top:124px;width:108px;height:19px;line-height:19px">-0,01</div>
<div class="dc" style="left:766px;top:124px;width:108px;height:19px;line-height:19px">-0,00</div>
<div class="dc" style="left:874px;top:124px;width:108px;height:19px;line-height:19px">0,0</div>
<div class="dc" style="left:982px;top:124px;width:108px;height:19px;line-height:19px">0,0</div>
<div class="dc" style="left:1090px;top:124px;width:108px;height:19px;line-height:19px">5,00</div>
<div class="rh" style="left:19px;top:143px;width:207px;height:19px;line-height:17px"><span class="a" style="left:34px">1/</span><span class="a" style="left:70px">4-1/</span><span class="a" style="left:106px">1</span></div>
<div class="dc" style="left:226px;top:143px;width:108px;height:19px;line-height:19px">-3,82</div>
<div class="dc" style="left:334px;top:143px;width:108px;height:19px;line-height:19px">13,06</div>
<div class="dc" style="left:442px;top:143px;width:108px;height:19px;line-height:19px">-11,34</div>
<div class="dc" style="left:550px;top:143px;width:108px;height:19px;line-height:19px">-0,01</div>
<div class="dc" style="left:658px;top:143px;width:108px;height:19px;line-height:19px">0,01</div>
<div class="dc" style="left:766px;top:143px;width:108px;height:19px;line-height:19px">-0,01</div>
<div class="dc" style="left:874px;top:143px;width:108px;height:19px;line-height:19px">0,0</div>
<div class="dc" style="left:982px;top:143px;width:108px;height:19px;line-height:19px">0,0</div>
<div class="dc" style="left:1090px;top:143px;width:108px;height:19px;line-height:19px">6,76</div>
<div class="rh" style="left:19px;top:162px;width:207px;height:19px;line-height:17px"><span class="a" style="left:34px">1/</span><span class="a" style="left:70px">4~3-1~2/</span><span class="a" style="left:142px">1</span></div>
<div class="dc" style="left:226px;top:162px;width:108px;height:19px;line-height:19px">-6,18</div>
<div class="dc" style="left:334px;top:162px;width:108px;height:19px;line-height:19px">19,99</div>
<div class="dc" style="left:442px;top:162px;width:108px;height:19px;line-height:19px">0,00</div>
<div class="dc" style="left:550px;top:162px;width:108px;height:19px;line-height:19px">-0,02</div>
<div class="dc" style="left:658px;top:162px;width:108px;height:19px;line-height:19px">0,01</div>
<div class="dc" style="left:766px;top:162px;width:108px;height:19px;line-height:19px">0,00</div>
<div class="dc" style="left:874px;top:162px;width:108px;height:19px;line-height:19px">0,0</div>
<div class="dc" style="left:982px;top:162px;width:108px;height:19px;line-height:19px">0,0</div>
<div class="dc" style="left:1090px;top:162px;width:108px;height:19px;line-height:19px">6,76</div>
<div class="rh" style="left:19px;top:181px;width:207px;height:19px;line-height:17px"><span class="a" style="left:34px">1/</span><span class="a" style="left:70px">3-2/</span><span class="a" style="left:106px">1</span></div>
<div class="dc" style="left:226px;top:181px;width:108px;height:19px;line-height:19px">-3,82</div>
<div class="dc" style="left:334px;top:181px;width:108px;height:19px;line-height:19px">13,06</div>
<div class="dc" style="left:442px;top:181px;width:108px;height:19px;line-height:19px">11,34</div>
<div class="dc" style="left:550px;top:181px;width:108px;height:19px;line-height:19px">-0,01</div>
<div class="dc" style="left:658px;top:181px;width:108px;height:19px;line-height:19px">0,01</div>
<div class="dc" style="left:766px;top:181px;width:108px;height:19px;line-height:19px">0,01</div>
<div class="dc" style="left:874px;top:181px;width:108px;height:19px;line-height:19px">0,0</div>
<div class="dc" style="left:982px;top:181px;width:108px;height:19px;line-height:19px">0,0</div>
<div class="dc" style="left:1090px;top:181px;width:108px;height:19px;line-height:19px">6,76</div>
<!-- vertical scrollbar -->
<svg class="a" style="left:1328px;top:48px" width="20" height="264"><path d="M5.5 11.5L10 7L14.5 11.5" fill="none" stroke="#606060" stroke-width="2"/><rect x="0" y="18" width="19" height="224" fill="#a6a6a6"/><path d="M5.5 250L10 254.5L14.5 250" fill="none" stroke="#606060" stroke-width="2"/></svg>
<div class="a" style="left:19px;top:311px;width:1309px;height:1px;background:#fff"></div>
<div class="a" style="left:1327px;top:48px;width:1px;height:264px;background:#fff"></div>
<!-- horizontal scrollbar -->
<svg class="a" style="left:683px;top:312px" width="645" height="20"><path d="M12.5 5.5L8 10L12.5 14.5" fill="none" stroke="#606060" stroke-width="2"/><rect x="20" y="0" width="603" height="19" fill="#a6a6a6"/><path d="M632 5.5L636.5 10L632 14.5" fill="none" stroke="#606060" stroke-width="2"/></svg>
<!-- sheet tabs -->
<svg class="a" style="left:16px;top:308px" width="668" height="26">
<rect x="0" y="3" width="666" height="22" fill="#f0f0f0"/>
<path d="M73 3.5H663" stroke="#000" stroke-width="1.5"/>
<path d="M2 3L8 24H67L73 3Z" fill="#fff"/>
<path d="M2 3L8 24M73 3L67 24" stroke="#000" stroke-width="1.3" fill="none"/>
<path d="M71 13L74 23.5" stroke="#000" stroke-width="1.1" fill="none"/>
<path d="M159.5 3.5L153 23.5M157 13L160.5 23.5" stroke="#000" stroke-width="1.2" fill="none"/>
<path d="M663 2V24" stroke="#000" stroke-width="2"/>
<path d="M666 3V24" stroke="#9a9a9a" stroke-width="1"/>
<path d="M2 23.5H663" stroke="#a0a0a0" stroke-width="1"/>
<text x="12" y="19" font-family="Liberation Sans" font-weight="bold" font-size="15.6" fill="#000">Values</text>
<text x="80" y="19" font-family="Liberation Sans" font-size="15.6" fill="#000">Envelope</text>
<text x="167" y="19" font-family="Liberation Sans" font-size="15.6" fill="#000">Global extremes</text>
</svg>
<!-- side 'tabs' panel -->
<div class="a" style="left:207px;top:193px;width:24px;height:150px;background:linear-gradient(90deg,#fbfbfb,#f3f3f3)"></div>
<svg class="a" style="left:207px;top:193px" width="25" height="60"><path d="M4 11L11 4V8H18V14H11V18Z" fill="#1a3caa"/><text transform="translate(17 38) rotate(-90)" font-family="Liberation Sans" font-size="14" text-anchor="middle" fill="#000">tabs</text></svg>
<!-- table highlights -->
<svg class="a" style="left:1080px;top:40px;mix-blend-mode:multiply" width="140" height="120">
<path d="M13 20L107 13V33L13 42Z" fill="#ffff00"/>
<path d="M24 53Q60 47 112 45L123 44V65L129 68V93L125 93V107L77 108V88L52 87V73L24 74Z" fill="#ffff00"/>
</svg>

<!-- DIALOG -->
<div class="a" id="dshadow"></div>
<div class="a" id="dlg"></div>
<div class="a" id="dlgtitle"></div>
<!-- dialog title -->
<svg class="a" style="left:249px;top:202px" width="20" height="20">
<rect width="20" height="20" fill="#fde8c6"/>
<rect x="1" y="1" width="18" height="11" fill="#fcdba6"/>
<path d="M5 2.5H11.5C14.5 2.5 15.5 4.5 15.5 6.6C15.5 8.6 14.2 10 12 10.4L15 15H11.8L9 10.8V15.3H5Z M9 5V8.4H11C12 8.4 12.3 7.6 12.3 6.7C12.3 5.8 12 5 11 5Z" fill="#e8a52a"/>
<path d="M5 2.5V15.3" stroke="#c98a20" stroke-width="1.2"/>
<path d="M11 15.5V18.5M11 15.5H12.5V17H11M13.5 16.5V18.5H15.5M16 17H18.5V18.5H16Z" stroke="#ff9a00" stroke-width="1.1" fill="none"/>
</svg>
<div class="a" style="left:275px;top:203px;font-size:15px;letter-spacing:-0.2px;color:#000;white-space:nowrap">Reduced results for panels</div>
<div class="a" style="left:496px;top:211px;width:13px;height:1px;background:#000"></div>
<div class="a" style="left:555px;top:206px;width:12px;height:12px;border:1px solid #cfcfcf"></div>
<svg class="a" style="left:613px;top:206px" width="14" height="14"><path d="M1 1L13 13M13 1L1 13" stroke="#000" stroke-width="1.2"/></svg>
<!-- tabs -->
<div class="a" style="left:252px;top:270px;width:285px;height:486px;background:#fff;border:1px solid #d9d9d9"></div>
<div class="tab" style="left:254px;width:52px">Results</div>
<div class="tab" style="left:356px;width:63px">Materials</div>
<div class="tab" style="left:418px;width:50px">Panels</div>
<div class="tab" style="left:467px;width:34px;padding-left:6px">Properties</div>
<div class="a" style="left:306px;top:247px;width:51px;height:25px;background:#fff;border:1px solid #d9d9d9;border-bottom:none"></div>
<div class="t" style="left:313px;top:251px">Cuts</div>
<div class="a" style="left:500px;top:249px;width:38px;height:19px;background:#f0f0f0;border:1px solid #adadad"></div>
<div class="a" style="left:518px;top:249px;width:1px;height:19px;background:#adadad"></div>
<svg class="a" style="left:500px;top:249px" width="38" height="19"><path d="M7 9.5L11 5.5V13.5Z" fill="#000"/><path d="M27 5.5L31 9.5L27 13.5Z" fill="#000"/></svg>
<!-- cut position group -->
<div class="grp" style="left:263px;top:299px;width:270px;height:258px"></div>
<div class="t" style="left:270px;top:292px;background:#fff;padding:0 2px">Cut position</div>
<div class="t" style="left:391px;top:312px">Vertical cuts</div>
<div class="t" style="left:273px;top:430px">Horizontal</div>
<div class="t" style="left:290px;top:445px">cuts</div>
<!-- diagram -->
<svg class="a" style="left:340px;top:350px" width="200" height="150">
<rect x="16" y="31" width="150" height="95" fill="#c0c0c0"/>
<path d="M356 475" fill="none"/>
<g stroke="#000" stroke-width="1" stroke-dasharray="6 4" fill="none" shape-rendering="crispEdges">
<path d="M16 40.5H166M16 78.5H166M16 116.5H166"/>
<path d="M31.5 31V126M90.5 31V126M149.5 31V126"/>
</g>
<rect x="27" y="36" width="127" height="85" fill="none" stroke="#000" stroke-width="2"/>
<g fill="#000"><circle cx="27" cy="36" r="2.7"/><circle cx="154" cy="36" r="2.7"/><circle cx="27" cy="121" r="2.7"/><circle cx="154" cy="121" r="2.7"/></g>

</svg>
<!-- checkboxes -->
<svg class="a" style="left:330px;top:350px" width="200" height="150">
<g fill="#fff" stroke="#333" stroke-width="1">
<rect x="33.5" y="8.5" width="13" height="13"/><rect x="103.5" y="8.5" width="13" height="13"/><rect x="171.5" y="6.5" width="13" height="13"/>
</g>
<g fill="#fff" stroke="#333" stroke-width="1">
<rect x="8.5" y="36.5" width="14" height="14"/><rect x="8.5" y="82.5" width="13" height="13"/><rect x="8.5" y="126.5" width="13" height="13"/>
</g>
<path transform="translate(33.0 8.0)" d="M3 7L5.8 10L11 3.5" fill="none" stroke="#333" stroke-width="1.2"/><path transform="translate(103.0 8.0)" d="M3 7L5.8 10L11 3.5" fill="none" stroke="#333" stroke-width="1.2"/><path transform="translate(171.0 6.0)" d="M3 7L5.8 10L11 3.5" fill="none" stroke="#333" stroke-width="1.2"/>
<path transform="translate(8.5 37.0)" d="M3 7L5.8 10L11 3.5" fill="none" stroke="#333" stroke-width="1.2"/><path transform="translate(8.0 82.0)" d="M3 7L5.8 10L11 3.5" fill="none" stroke="#333" stroke-width="1.2"/><path transform="translate(8.0 126.0)" d="M3 7L5.8 10L11 3.5" fill="none" stroke="#333" stroke-width="1.2"/>
</svg>
<!-- highlights -->
<svg class="a mb" style="left:330px;top:380px" width="50" height="120"><path d="M7 4Q5 3 8 3L26 3Q29 6 28 14L28 24Q20 26 7 25Q5 14 7 4Z" fill="#ffff00"/><path d="M4 46Q6 44 12 45L25 46Q26 56 25 66L4 66Q3 56 4 46Z" fill="#ffff00"/><path d="M3 90H11L12 91H26V89H40L45 95V115.7H35L27 112H4L3 111Z" fill="#ffff00"/></svg>
<svg class="a" style="left:290px;top:518px" width="180" height="24">
<rect x="6.5" y="5.5" width="14" height="14" fill="#fff" stroke="#333"/>
<rect x="153.5" y="5.5" width="14" height="14" fill="#fff" stroke="#333"/>
</svg>
<div class="t" style="left:315px;top:524px">All</div>
<div class="t" style="left:462px;top:524px">None</div>
<!-- info cuts -->
<div class="grp" style="left:261px;top:575px;width:266px;height:75px"></div>
<div class="t" style="left:268px;top:568px;background:#fff;padding:0 2px">Info - cuts</div>
<svg class="a" style="left:271px;top:589px" width="92" height="50">
<path d="M4 11L12 5L20 4L42 3L70 3L84 5L88 6V27L70 26L42 25L20 25L4 27Z" fill="#ffff00"/>
<rect x="4.5" y="6.5" width="15" height="15" fill="#ffff00" stroke="#222" stroke-width="1.1"/>
<path d="M7 14L10.5 18L17 10" fill="none" stroke="#222" stroke-width="1.2"/>
<rect x="4.5" y="30.5" width="15" height="15" fill="#fff" stroke="#333"/>
</svg>
<div class="t" style="left:294px;top:596px">Cut length</div>
<div class="t" style="left:294px;top:620px">Panel height</div>
<!-- edit -->
<div class="a" style="left:256px;top:765px;width:285px;height:28px;background:#fff;border:1px solid #7a7a7a"></div>
<div class="t" style="left:262px;top:769px">Reduced results for panels</div>
<!-- radio group -->
<div class="grp" style="left:258px;top:806px;width:380px;height:38px"></div>
<div class="t" style="left:265px;top:798px;background:#f0f0f0;padding:0 2px">For the active table, columns selected on this tab</div>
<svg class="a" style="left:260px;top:818px" width="210" height="22">
<circle cx="11" cy="11" r="7" fill="#fff" stroke="#333" stroke-width="1"/><circle cx="11" cy="11" r="4.2" fill="#333"/>
<circle cx="193" cy="11" r="7" fill="#fff" stroke="#333" stroke-width="1"/>
</svg>
<div class="t" style="left:282px;top:822px">will be added</div>
<div class="t" style="left:464px;top:822px">will replace existing ones</div>
<!-- buttons -->
<div class="btn" style="top:272px;border:2px solid #0078d7;line-height:23px">OK</div>
<div class="btn" style="top:304px">Cancel</div>
<div class="btn" style="top:338px">Help</div>
<div class="btn" style="top:404px">Filters</div>
<div class="btn" style="top:438px">Extremes</div>
<div class="btn" style="top:470px">Cases</div>

</body></html>
